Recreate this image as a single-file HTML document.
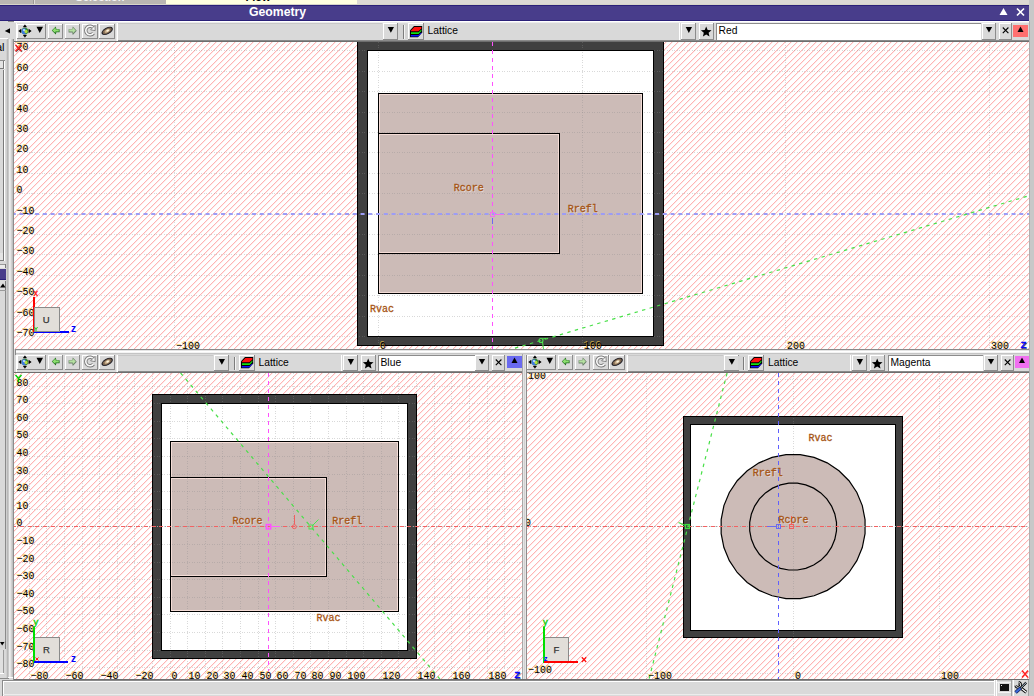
<!DOCTYPE html>
<html><head><meta charset="utf-8"><title>Geometry</title>
<style>
html,body{margin:0;padding:0;width:1034px;height:696px;overflow:hidden;background:#d9d9d9;}
svg text{font-family:"Liberation Sans",sans-serif;}
svg .m{font-family:"Liberation Mono",monospace;}
</style></head><body>
<svg width="1034" height="696" viewBox="0 0 1034 696" style="position:absolute;left:0;top:0" shape-rendering="crispEdges">
<defs><clipPath id="c1"><rect x="14" y="42" width="1015" height="307"/></clipPath><clipPath id="c2"><rect x="14" y="373" width="508" height="306"/></clipPath><clipPath id="c3"><rect x="527" y="373" width="502" height="306"/></clipPath></defs>
<rect x="0" y="0" width="1034" height="696" fill="#d9d9d9" />
<rect x="0" y="0" width="1034" height="5" fill="#b9b6b2" />
<rect x="166" y="0" width="191" height="4" fill="#ffffe0" />
<rect x="357" y="0" width="672" height="4" fill="#dcd9d4" />
<rect x="0" y="4" width="1029" height="1" fill="#d6d4c8" />
<rect x="33" y="0" width="1" height="4" fill="#9a9894" />
<rect x="34" y="0" width="1" height="4" fill="#dedcd8" />
<text x="100" y="1" font-size="11" font-weight="bold" fill="#f4f4f4" text-anchor="middle">Selection</text>
<text x="258" y="1" font-size="11" font-weight="bold" fill="#000" text-anchor="middle">Flow</text>
<rect x="0" y="5" width="1029" height="16" fill="#483d8b" />
<rect x="0" y="5" width="1029" height="1" fill="#2a2078" />
<rect x="0" y="20" width="1029" height="1" fill="#2a2078" />
<text x="277.6" y="15.8" font-size="12.25" font-weight="bold" fill="#fff" text-anchor="middle">Geometry</text>
<path d="M999.5 15 L1003.5 8 L1007.5 15 Z" fill="#fff" shape-rendering="auto"/>
<path d="M1017 8.5 L1024 15.5 M1024 8.5 L1017 15.5" stroke="#fff" stroke-width="1.7" shape-rendering="auto"/>
<rect x="1029" y="0" width="5" height="696" fill="#c8c8c8" />
<rect x="1029" y="21" width="1" height="660" fill="#b0b0b0" />
<rect x="0" y="21" width="14" height="659" fill="#d9d9d9" />
<rect x="8" y="21" width="6" height="1" fill="#8c8c8c" />
<path d="M4.8 30.9 L10 28.2 L10 33.6 Z" fill="#000" shape-rendering="auto"/>
<rect x="0" y="38" width="8" height="1" fill="#ffffff" />
<text x="-4.1" y="50.8" font-size="11" fill="#000">al</text>
<rect x="0" y="60" width="5" height="1" fill="#8c8c8c" />
<rect x="0" y="61" width="3" height="7" fill="#e4e4e4" />
<rect x="3" y="61" width="1" height="8" fill="#7a7a7a" />
<rect x="0" y="68" width="4" height="1" fill="#7a7a7a" />
<rect x="4" y="61" width="1" height="8" fill="#ffffff" />
<rect x="3" y="70" width="1" height="183" fill="#7a7a7a" />
<rect x="4" y="70" width="1" height="183" fill="#ffffff" />
<rect x="0" y="253" width="3" height="8" fill="#e4e4e4" />
<rect x="3" y="253" width="1" height="8" fill="#7a7a7a" />
<rect x="0" y="260" width="4" height="1" fill="#7a7a7a" />
<rect x="4" y="253" width="1" height="8" fill="#ffffff" />
<rect x="0" y="264" width="6" height="4" fill="#ececec" />
<rect x="0" y="264" width="7" height="1" fill="#9a9a9a" />
<rect x="5" y="264" width="1" height="4" fill="#7a7a7a" />
<rect x="0" y="269" width="7" height="11" fill="#483d8b" />
<rect x="0" y="279" width="7" height="1" fill="#2a2078" />
<rect x="0" y="281" width="6" height="9" fill="#dcdcdc" />
<rect x="5" y="281" width="1" height="10" fill="#7a7a7a" />
<rect x="0" y="290" width="6" height="1" fill="#9a9a9a" />
<path d="M0 287.5 L3 283.5 L5.5 287.5 Z" fill="#000" shape-rendering="auto"/>
<rect x="5" y="291" width="1" height="350" fill="#8a8a8a" />
<rect x="0" y="641" width="5" height="7" fill="#d4d4d4" />
<rect x="5" y="641" width="1" height="8" fill="#7a7a7a" />
<path d="M0 642 L4.5 642 L2.2 645.5 Z" fill="#000" shape-rendering="auto"/>
<rect x="0" y="650" width="3" height="23" fill="#e0e0e0" />
<rect x="3" y="650" width="1" height="24" fill="#9a9a9a" />
<rect x="0" y="673" width="4" height="1" fill="#ffffff" />
<rect x="6" y="40" width="1" height="639" fill="#cfcfcf" />
<rect x="0" y="678" width="9" height="1" fill="#8a8a8a" />
<rect x="7" y="39" width="1" height="639" fill="#b8b8b8" />
<rect x="8" y="39" width="1" height="639" fill="#c8c8c8" />
<rect x="9" y="39" width="1" height="639" fill="#ececec" />
<rect x="10" y="39" width="1" height="639" fill="#e4e4e4" />
<rect x="11" y="39" width="1" height="639" fill="#d0d0d0" />
<rect x="12" y="39" width="1" height="639" fill="#c0c0c0" />
<rect x="13" y="39" width="1" height="641" fill="#8c8c8c" />
<rect x="8" y="677" width="5" height="1" fill="#ffffff" />
<rect x="14" y="21" width="1015" height="21" fill="#d9d9d9" />
<rect x="14" y="41" width="1015" height="1" fill="#6e6e6e" />
<rect x="16" y="22" width="1" height="19" fill="#ffffff" />
<rect x="117" y="22" width="1" height="19" fill="#ffffff" />
<rect x="17" y="24" width="29" height="15" fill="#d9d9d9" />
<rect x="17" y="24" width="29" height="1" fill="#ffffff" />
<rect x="17" y="24" width="1" height="15" fill="#ffffff" />
<rect x="17" y="38" width="29" height="1" fill="#8c8c8c" />
<rect x="45" y="24" width="1" height="15" fill="#8c8c8c" />
<g shape-rendering="auto"><path d="M24.9 24.8 L23.299999999999997 27.1 L26.5 27.1 Z M24.9 37.3 L23.299999999999997 35 L26.5 35 Z M18.7 31 L21.099999999999998 29.3 L21.099999999999998 32.7 Z M31.2 31 L28.799999999999997 29.3 L28.799999999999997 32.7 Z" fill="#000" stroke="#000" stroke-width="0.6"/><circle cx="24.9" cy="31" r="3.3" fill="#2f8a2a"/><ellipse cx="24.0" cy="31.2" rx="2.3" ry="3" fill="#3c78e0"/><circle cx="26.0" cy="31.4" r="1.6" fill="#b8e040"/><circle cx="24.0" cy="30.1" r="1.1" fill="#c8e4ff"/></g>
<path d="M36.5 26.8 L43 26.8 L39.75 33 Z" fill="#000" shape-rendering="auto"/>
<rect x="48" y="24" width="15" height="15" fill="#d9d9d9" />
<rect x="48" y="24" width="15" height="1" fill="#ffffff" />
<rect x="48" y="24" width="1" height="15" fill="#ffffff" />
<rect x="48" y="38" width="15" height="1" fill="#8c8c8c" />
<rect x="62" y="24" width="1" height="15" fill="#8c8c8c" />
<g shape-rendering="auto"><path d="M51.8 30.6 L55.8 26.6 L56.4 29.200000000000003 L59.599999999999994 29.200000000000003 L59.599999999999994 32.2 L56.4 32.2 L55.8 34.6 Z" fill="#1d6a1d"/><path d="M52.4 30.6 L55.4 27.6 L55.8 29.6 L58.8 29.6 L58.8 31.400000000000002 L55.4 31.400000000000002 L55.4 33.0 Z" fill="#8ee070"/></g>
<rect x="65" y="24" width="15" height="15" fill="#d9d9d9" />
<rect x="65" y="24" width="15" height="1" fill="#ffffff" />
<rect x="65" y="24" width="1" height="15" fill="#ffffff" />
<rect x="65" y="38" width="15" height="1" fill="#8c8c8c" />
<rect x="79" y="24" width="1" height="15" fill="#8c8c8c" />
<g shape-rendering="auto"><path d="M76.80000000000001 30.8 L72.80000000000001 26.6 L72.2 29.200000000000003 L68.60000000000001 29.200000000000003 L68.60000000000001 32.4 L72.2 32.4 L72.80000000000001 35.0 Z" fill="#6a806a"/><path d="M75.80000000000001 30.400000000000002 L72.80000000000001 27.400000000000002 L72.4 29.6 L69.2 29.6 L69.2 31.6 L72.80000000000001 31.6 L72.80000000000001 33.2 Z" fill="#b4e0a0"/></g>
<rect x="82" y="24" width="16" height="15" fill="#d9d9d9" />
<rect x="82" y="24" width="16" height="1" fill="#ffffff" />
<rect x="82" y="24" width="1" height="15" fill="#ffffff" />
<rect x="82" y="38" width="16" height="1" fill="#8c8c8c" />
<rect x="97" y="24" width="1" height="15" fill="#8c8c8c" />
<g shape-rendering="auto" fill="none"><path d="M93.7 28.2 A4.3 4.3 0 1 0 93.5 33.1" stroke="#7a7a7a" stroke-width="3.4"/><path d="M93.7 28.2 A4.3 4.3 0 1 0 93.5 33.1" stroke="#f8f8f8" stroke-width="1.6"/><path d="M90.6 29.8 L95.2 30.6 L95 25.4 Z" fill="#f8f8f8" stroke="#7a7a7a" stroke-width="0.9"/></g>
<rect x="99" y="24" width="16" height="15" fill="#d9d9d9" />
<rect x="99" y="24" width="16" height="1" fill="#ffffff" />
<rect x="99" y="24" width="1" height="15" fill="#ffffff" />
<rect x="99" y="38" width="16" height="1" fill="#8c8c8c" />
<rect x="114" y="24" width="1" height="15" fill="#8c8c8c" />
<g shape-rendering="auto" transform="translate(107.2,30.9) rotate(-28)"><ellipse rx="6.2" ry="3.3" fill="#1c1c24"/><ellipse rx="5" ry="2.3" fill="#7c6650"/><ellipse rx="3" ry="1.5" fill="#c8ae88"/><ellipse cx="0.5" rx="1.5" ry="0.9" fill="#fff4dc"/></g>
<rect x="118" y="23" width="264" height="1" fill="#c8c8c8" />
<rect x="118" y="40" width="911" height="1" fill="#8a8a8a" />
<rect x="116" y="22" width="1" height="19" fill="#ececec" />
<rect x="383" y="23" width="15" height="17" fill="#d9d9d9" />
<rect x="383" y="23" width="15" height="1" fill="#ffffff" />
<rect x="383" y="23" width="1" height="17" fill="#ffffff" />
<rect x="383" y="39" width="15" height="1" fill="#8c8c8c" />
<rect x="397" y="23" width="1" height="17" fill="#8c8c8c" />
<path d="M387.7 27 L394 27 L390.85 32.8 Z" fill="#000" shape-rendering="auto"/>
<rect x="398" y="24" width="10" height="15" fill="#d4d4d4" />
<rect x="403" y="25" width="1" height="14" fill="#7c7c7c" />
<rect x="404" y="25" width="1" height="14" fill="#f4f4f4" />
<rect x="408" y="23" width="16" height="17" fill="#d9d9d9" />
<rect x="408" y="23" width="16" height="1" fill="#ffffff" />
<rect x="408" y="23" width="1" height="17" fill="#ffffff" />
<rect x="408" y="39" width="16" height="1" fill="#8c8c8c" />
<rect x="423" y="23" width="1" height="17" fill="#8c8c8c" />
<g shape-rendering="auto"><polygon points="410,30.2 414,26 422.2,26 422.2,32.5 418,37.2 410,37.2" fill="#000"/><polygon points="411,30.6 414.4,27 421.4,27 421.4,28.5 418.4,31.2 411,31.2" fill="#ff1010"/><polygon points="411,32.2 418.6,32.2 421.4,29.6 421.4,31 418.6,34 411,34" fill="#10e010"/><polygon points="410.8,35 418.6,35 421.4,32.2 421.4,33.2 418.4,36.4 410.8,36.4" fill="#1010ff"/></g>
<text x="427.6" y="33.6" font-size="10.3" fill="#000">Lattice</text>
<rect x="679" y="23" width="1" height="17" fill="#ffffff" />
<rect x="681" y="23" width="15" height="17" fill="#d9d9d9" />
<rect x="681" y="23" width="15" height="1" fill="#ffffff" />
<rect x="681" y="23" width="1" height="17" fill="#ffffff" />
<rect x="681" y="39" width="15" height="1" fill="#8c8c8c" />
<rect x="695" y="23" width="1" height="17" fill="#8c8c8c" />
<path d="M685.7 27 L692 27 L688.85 33 Z" fill="#000" shape-rendering="auto"/>
<rect x="699" y="23" width="15" height="17" fill="#d9d9d9" />
<rect x="699" y="23" width="15" height="1" fill="#ffffff" />
<rect x="699" y="23" width="1" height="17" fill="#ffffff" />
<rect x="699" y="39" width="15" height="1" fill="#8c8c8c" />
<rect x="713" y="23" width="1" height="17" fill="#8c8c8c" />
<polygon points="706.2,26.4 707.68,29.96 711.53,30.27 708.6,32.78 709.49,36.53 706.2,34.52 702.91,36.53 703.8,32.78 700.87,30.27 704.72,29.96" fill="#000" shape-rendering="auto"/>
<rect x="716" y="23" width="265" height="17" fill="#ffffff" />
<rect x="716" y="23" width="265" height="1" fill="#8c8c8c" />
<rect x="716" y="23" width="1" height="17" fill="#8c8c8c" />
<text x="718.5" y="34.4" font-size="10.3" fill="#000">Red</text>
<rect x="982" y="23" width="14" height="17" fill="#d9d9d9" />
<rect x="982" y="23" width="14" height="1" fill="#ffffff" />
<rect x="982" y="23" width="1" height="17" fill="#ffffff" />
<rect x="982" y="39" width="14" height="1" fill="#8c8c8c" />
<rect x="995" y="23" width="1" height="17" fill="#8c8c8c" />
<path d="M985.85 27.1 L992.15 27.1 L989 32.5 Z" fill="#000" shape-rendering="auto"/>
<rect x="999" y="23" width="13" height="17" fill="#d9d9d9" />
<rect x="999" y="23" width="13" height="1" fill="#ffffff" />
<rect x="999" y="23" width="1" height="17" fill="#ffffff" />
<rect x="999" y="39" width="13" height="1" fill="#8c8c8c" />
<rect x="1011" y="23" width="1" height="17" fill="#8c8c8c" />
<path d="M1002.8 27.5 L1008.4 33.1 M1008.4 27.5 L1002.8 33.1" stroke="#000" stroke-width="1.1" shape-rendering="auto"/>
<rect x="1013" y="25" width="15" height="12" fill="#ff7070" />
<path d="M1017.5 32 L1023.5 32 L1020.5 26.6 Z" fill="#000" shape-rendering="auto"/>
<rect x="14" y="21" width="1015" height="1" fill="#ffffff" />
<rect x="14" y="22" width="1015" height="1" fill="#ececec" />
<rect x="14" y="352" width="509" height="21" fill="#d9d9d9" />
<rect x="14" y="372" width="509" height="1" fill="#6e6e6e" />
<rect x="16" y="353" width="1" height="19" fill="#ffffff" />
<rect x="117" y="353" width="1" height="19" fill="#ffffff" />
<rect x="17" y="355" width="29" height="15" fill="#d9d9d9" />
<rect x="17" y="355" width="29" height="1" fill="#ffffff" />
<rect x="17" y="355" width="1" height="15" fill="#ffffff" />
<rect x="17" y="369" width="29" height="1" fill="#8c8c8c" />
<rect x="45" y="355" width="1" height="15" fill="#8c8c8c" />
<g shape-rendering="auto"><path d="M24.9 355.8 L23.299999999999997 358.1 L26.5 358.1 Z M24.9 368.3 L23.299999999999997 366 L26.5 366 Z M18.7 362 L21.099999999999998 360.3 L21.099999999999998 363.7 Z M31.2 362 L28.799999999999997 360.3 L28.799999999999997 363.7 Z" fill="#000" stroke="#000" stroke-width="0.6"/><circle cx="24.9" cy="362" r="3.3" fill="#2f8a2a"/><ellipse cx="24.0" cy="362.2" rx="2.3" ry="3" fill="#3c78e0"/><circle cx="26.0" cy="362.4" r="1.6" fill="#b8e040"/><circle cx="24.0" cy="361.1" r="1.1" fill="#c8e4ff"/></g>
<path d="M36.5 357.8 L43 357.8 L39.75 364 Z" fill="#000" shape-rendering="auto"/>
<rect x="48" y="355" width="15" height="15" fill="#d9d9d9" />
<rect x="48" y="355" width="15" height="1" fill="#ffffff" />
<rect x="48" y="355" width="1" height="15" fill="#ffffff" />
<rect x="48" y="369" width="15" height="1" fill="#8c8c8c" />
<rect x="62" y="355" width="1" height="15" fill="#8c8c8c" />
<g shape-rendering="auto"><path d="M51.8 361.6 L55.8 357.6 L56.4 360.20000000000005 L59.599999999999994 360.20000000000005 L59.599999999999994 363.20000000000005 L56.4 363.20000000000005 L55.8 365.6 Z" fill="#1d6a1d"/><path d="M52.4 361.6 L55.4 358.6 L55.8 360.6 L58.8 360.6 L58.8 362.40000000000003 L55.4 362.40000000000003 L55.4 364.0 Z" fill="#8ee070"/></g>
<rect x="65" y="355" width="15" height="15" fill="#d9d9d9" />
<rect x="65" y="355" width="15" height="1" fill="#ffffff" />
<rect x="65" y="355" width="1" height="15" fill="#ffffff" />
<rect x="65" y="369" width="15" height="1" fill="#8c8c8c" />
<rect x="79" y="355" width="1" height="15" fill="#8c8c8c" />
<g shape-rendering="auto"><path d="M76.80000000000001 361.8 L72.80000000000001 357.6 L72.2 360.20000000000005 L68.60000000000001 360.20000000000005 L68.60000000000001 363.40000000000003 L72.2 363.40000000000003 L72.80000000000001 366.0 Z" fill="#6a806a"/><path d="M75.80000000000001 361.40000000000003 L72.80000000000001 358.40000000000003 L72.4 360.6 L69.2 360.6 L69.2 362.6 L72.80000000000001 362.6 L72.80000000000001 364.20000000000005 Z" fill="#b4e0a0"/></g>
<rect x="82" y="355" width="16" height="15" fill="#d9d9d9" />
<rect x="82" y="355" width="16" height="1" fill="#ffffff" />
<rect x="82" y="355" width="1" height="15" fill="#ffffff" />
<rect x="82" y="369" width="16" height="1" fill="#8c8c8c" />
<rect x="97" y="355" width="1" height="15" fill="#8c8c8c" />
<g shape-rendering="auto" fill="none"><path d="M93.7 359.2 A4.3 4.3 0 1 0 93.5 364.1" stroke="#7a7a7a" stroke-width="3.4"/><path d="M93.7 359.2 A4.3 4.3 0 1 0 93.5 364.1" stroke="#f8f8f8" stroke-width="1.6"/><path d="M90.6 360.8 L95.2 361.6 L95 356.4 Z" fill="#f8f8f8" stroke="#7a7a7a" stroke-width="0.9"/></g>
<rect x="99" y="355" width="16" height="15" fill="#d9d9d9" />
<rect x="99" y="355" width="16" height="1" fill="#ffffff" />
<rect x="99" y="355" width="1" height="15" fill="#ffffff" />
<rect x="99" y="369" width="16" height="1" fill="#8c8c8c" />
<rect x="114" y="355" width="1" height="15" fill="#8c8c8c" />
<g shape-rendering="auto" transform="translate(107.2,361.9) rotate(-28)"><ellipse rx="6.2" ry="3.3" fill="#1c1c24"/><ellipse rx="5" ry="2.3" fill="#7c6650"/><ellipse rx="3" ry="1.5" fill="#c8ae88"/><ellipse cx="0.5" rx="1.5" ry="0.9" fill="#fff4dc"/></g>
<rect x="118" y="355" width="95" height="1" fill="#c8c8c8" />
<rect x="118" y="371" width="405" height="1" fill="#8a8a8a" />
<rect x="116" y="353" width="1" height="19" fill="#ececec" />
<rect x="214" y="355" width="15" height="16" fill="#d9d9d9" />
<rect x="214" y="355" width="15" height="1" fill="#ffffff" />
<rect x="214" y="355" width="1" height="16" fill="#ffffff" />
<rect x="214" y="370" width="15" height="1" fill="#8c8c8c" />
<rect x="228" y="355" width="1" height="16" fill="#8c8c8c" />
<path d="M218.7 359 L225 359 L221.85 364.8 Z" fill="#000" shape-rendering="auto"/>
<rect x="229" y="356" width="10" height="14" fill="#d4d4d4" />
<rect x="234" y="357" width="1" height="13" fill="#7c7c7c" />
<rect x="235" y="357" width="1" height="13" fill="#f4f4f4" />
<rect x="239" y="355" width="16" height="16" fill="#d9d9d9" />
<rect x="239" y="355" width="16" height="1" fill="#ffffff" />
<rect x="239" y="355" width="1" height="16" fill="#ffffff" />
<rect x="239" y="370" width="16" height="1" fill="#8c8c8c" />
<rect x="254" y="355" width="1" height="16" fill="#8c8c8c" />
<g shape-rendering="auto"><polygon points="241,361.2 245,357 253.2,357 253.2,363.5 249,368.2 241,368.2" fill="#000"/><polygon points="242,361.6 245.4,358 252.4,358 252.4,359.5 249.4,362.2 242,362.2" fill="#ff1010"/><polygon points="242,363.2 249.6,363.2 252.4,360.6 252.4,362 249.6,365 242,365" fill="#10e010"/><polygon points="241.8,366 249.6,366 252.4,363.2 252.4,364.2 249.4,367.4 241.8,367.4" fill="#1010ff"/></g>
<text x="258.5" y="365.6" font-size="10.3" fill="#000">Lattice</text>
<rect x="341" y="355" width="1" height="16" fill="#ffffff" />
<rect x="343" y="355" width="15" height="16" fill="#d9d9d9" />
<rect x="343" y="355" width="15" height="1" fill="#ffffff" />
<rect x="343" y="355" width="1" height="16" fill="#ffffff" />
<rect x="343" y="370" width="15" height="1" fill="#8c8c8c" />
<rect x="357" y="355" width="1" height="16" fill="#8c8c8c" />
<path d="M347.7 359 L354 359 L350.85 365 Z" fill="#000" shape-rendering="auto"/>
<rect x="361" y="355" width="15" height="16" fill="#d9d9d9" />
<rect x="361" y="355" width="15" height="1" fill="#ffffff" />
<rect x="361" y="355" width="1" height="16" fill="#ffffff" />
<rect x="361" y="370" width="15" height="1" fill="#8c8c8c" />
<rect x="375" y="355" width="1" height="16" fill="#8c8c8c" />
<polygon points="368.2,358.4 369.68,361.96 373.53,362.27 370.6,364.78 371.49,368.53 368.2,366.52 364.91,368.53 365.8,364.78 362.87,362.27 366.72,361.96" fill="#000" shape-rendering="auto"/>
<rect x="378" y="355" width="97" height="16" fill="#ffffff" />
<rect x="378" y="355" width="97" height="1" fill="#8c8c8c" />
<rect x="378" y="355" width="1" height="16" fill="#8c8c8c" />
<text x="380.5" y="366.4" font-size="10.3" fill="#000">Blue</text>
<rect x="475" y="355" width="14" height="16" fill="#d9d9d9" />
<rect x="475" y="355" width="14" height="1" fill="#ffffff" />
<rect x="475" y="355" width="1" height="16" fill="#ffffff" />
<rect x="475" y="370" width="14" height="1" fill="#8c8c8c" />
<rect x="488" y="355" width="1" height="16" fill="#8c8c8c" />
<path d="M478.85 359.1 L485.15 359.1 L482 364.5 Z" fill="#000" shape-rendering="auto"/>
<rect x="492" y="355" width="13" height="16" fill="#d9d9d9" />
<rect x="492" y="355" width="13" height="1" fill="#ffffff" />
<rect x="492" y="355" width="1" height="16" fill="#ffffff" />
<rect x="492" y="370" width="13" height="1" fill="#8c8c8c" />
<rect x="504" y="355" width="1" height="16" fill="#8c8c8c" />
<path d="M495.8 359.5 L501.4 365.1 M501.4 359.5 L495.8 365.1" stroke="#000" stroke-width="1.1" shape-rendering="auto"/>
<rect x="507" y="356" width="15" height="12" fill="#6a6af0" />
<path d="M511.5 363 L517.5 363 L514.5 357.6 Z" fill="#000" shape-rendering="auto"/>
<rect x="527" y="352" width="502" height="21" fill="#d9d9d9" />
<rect x="527" y="372" width="502" height="1" fill="#6e6e6e" />
<rect x="526" y="353" width="1" height="19" fill="#ffffff" />
<rect x="627" y="353" width="1" height="19" fill="#ffffff" />
<rect x="527" y="355" width="29" height="15" fill="#d9d9d9" />
<rect x="527" y="355" width="29" height="1" fill="#ffffff" />
<rect x="527" y="355" width="1" height="15" fill="#ffffff" />
<rect x="527" y="369" width="29" height="1" fill="#8c8c8c" />
<rect x="555" y="355" width="1" height="15" fill="#8c8c8c" />
<g shape-rendering="auto"><path d="M534.9 355.8 L533.3 358.1 L536.5 358.1 Z M534.9 368.3 L533.3 366 L536.5 366 Z M528.6999999999999 362 L531.1 360.3 L531.1 363.7 Z M541.1999999999999 362 L538.8 360.3 L538.8 363.7 Z" fill="#000" stroke="#000" stroke-width="0.6"/><circle cx="534.9" cy="362" r="3.3" fill="#2f8a2a"/><ellipse cx="534.0" cy="362.2" rx="2.3" ry="3" fill="#3c78e0"/><circle cx="536.0" cy="362.4" r="1.6" fill="#b8e040"/><circle cx="534.0" cy="361.1" r="1.1" fill="#c8e4ff"/></g>
<path d="M546.5 357.8 L553 357.8 L549.75 364 Z" fill="#000" shape-rendering="auto"/>
<rect x="558" y="355" width="15" height="15" fill="#d9d9d9" />
<rect x="558" y="355" width="15" height="1" fill="#ffffff" />
<rect x="558" y="355" width="1" height="15" fill="#ffffff" />
<rect x="558" y="369" width="15" height="1" fill="#8c8c8c" />
<rect x="572" y="355" width="1" height="15" fill="#8c8c8c" />
<g shape-rendering="auto"><path d="M561.8 361.6 L565.8 357.6 L566.4 360.20000000000005 L569.5999999999999 360.20000000000005 L569.5999999999999 363.20000000000005 L566.4 363.20000000000005 L565.8 365.6 Z" fill="#1d6a1d"/><path d="M562.4 361.6 L565.4 358.6 L565.8 360.6 L568.8 360.6 L568.8 362.40000000000003 L565.4 362.40000000000003 L565.4 364.0 Z" fill="#8ee070"/></g>
<rect x="575" y="355" width="15" height="15" fill="#d9d9d9" />
<rect x="575" y="355" width="15" height="1" fill="#ffffff" />
<rect x="575" y="355" width="1" height="15" fill="#ffffff" />
<rect x="575" y="369" width="15" height="1" fill="#8c8c8c" />
<rect x="589" y="355" width="1" height="15" fill="#8c8c8c" />
<g shape-rendering="auto"><path d="M586.8 361.8 L582.8 357.6 L582.1999999999999 360.20000000000005 L578.6 360.20000000000005 L578.6 363.40000000000003 L582.1999999999999 363.40000000000003 L582.8 366.0 Z" fill="#6a806a"/><path d="M585.8 361.40000000000003 L582.8 358.40000000000003 L582.4 360.6 L579.1999999999999 360.6 L579.1999999999999 362.6 L582.8 362.6 L582.8 364.20000000000005 Z" fill="#b4e0a0"/></g>
<rect x="593" y="355" width="16" height="15" fill="#d9d9d9" />
<rect x="593" y="355" width="16" height="1" fill="#ffffff" />
<rect x="593" y="355" width="1" height="15" fill="#ffffff" />
<rect x="593" y="369" width="16" height="1" fill="#8c8c8c" />
<rect x="608" y="355" width="1" height="15" fill="#8c8c8c" />
<g shape-rendering="auto" fill="none"><path d="M604.7 359.2 A4.3 4.3 0 1 0 604.5 364.1" stroke="#7a7a7a" stroke-width="3.4"/><path d="M604.7 359.2 A4.3 4.3 0 1 0 604.5 364.1" stroke="#f8f8f8" stroke-width="1.6"/><path d="M601.6 360.8 L606.2 361.6 L606 356.4 Z" fill="#f8f8f8" stroke="#7a7a7a" stroke-width="0.9"/></g>
<rect x="609" y="355" width="16" height="15" fill="#d9d9d9" />
<rect x="609" y="355" width="16" height="1" fill="#ffffff" />
<rect x="609" y="355" width="1" height="15" fill="#ffffff" />
<rect x="609" y="369" width="16" height="1" fill="#8c8c8c" />
<rect x="624" y="355" width="1" height="15" fill="#8c8c8c" />
<g shape-rendering="auto" transform="translate(617.2,361.9) rotate(-28)"><ellipse rx="6.2" ry="3.3" fill="#1c1c24"/><ellipse rx="5" ry="2.3" fill="#7c6650"/><ellipse rx="3" ry="1.5" fill="#c8ae88"/><ellipse cx="0.5" rx="1.5" ry="0.9" fill="#fff4dc"/></g>
<rect x="628" y="355" width="95" height="1" fill="#c8c8c8" />
<rect x="628" y="371" width="401" height="1" fill="#8a8a8a" />
<rect x="626" y="353" width="1" height="19" fill="#ececec" />
<rect x="724" y="355" width="15" height="16" fill="#d9d9d9" />
<rect x="724" y="355" width="15" height="1" fill="#ffffff" />
<rect x="724" y="355" width="1" height="16" fill="#ffffff" />
<rect x="724" y="370" width="15" height="1" fill="#8c8c8c" />
<rect x="738" y="355" width="1" height="16" fill="#8c8c8c" />
<path d="M728.7 359 L735 359 L731.85 364.8 Z" fill="#000" shape-rendering="auto"/>
<rect x="738" y="356" width="10" height="14" fill="#d4d4d4" />
<rect x="743" y="357" width="1" height="13" fill="#7c7c7c" />
<rect x="744" y="357" width="1" height="13" fill="#f4f4f4" />
<rect x="748" y="355" width="16" height="16" fill="#d9d9d9" />
<rect x="748" y="355" width="16" height="1" fill="#ffffff" />
<rect x="748" y="355" width="1" height="16" fill="#ffffff" />
<rect x="748" y="370" width="16" height="1" fill="#8c8c8c" />
<rect x="763" y="355" width="1" height="16" fill="#8c8c8c" />
<g shape-rendering="auto"><polygon points="750,361.2 754,357 762.2,357 762.2,363.5 758,368.2 750,368.2" fill="#000"/><polygon points="751,361.6 754.4,358 761.4,358 761.4,359.5 758.4,362.2 751,362.2" fill="#ff1010"/><polygon points="751,363.2 758.6,363.2 761.4,360.6 761.4,362 758.6,365 751,365" fill="#10e010"/><polygon points="750.8,366 758.6,366 761.4,363.2 761.4,364.2 758.4,367.4 750.8,367.4" fill="#1010ff"/></g>
<text x="768" y="365.6" font-size="10.3" fill="#000">Lattice</text>
<rect x="850" y="355" width="1" height="16" fill="#ffffff" />
<rect x="852" y="355" width="15" height="16" fill="#d9d9d9" />
<rect x="852" y="355" width="15" height="1" fill="#ffffff" />
<rect x="852" y="355" width="1" height="16" fill="#ffffff" />
<rect x="852" y="370" width="15" height="1" fill="#8c8c8c" />
<rect x="866" y="355" width="1" height="16" fill="#8c8c8c" />
<path d="M856.7 359 L863 359 L859.85 365 Z" fill="#000" shape-rendering="auto"/>
<rect x="870" y="355" width="15" height="16" fill="#d9d9d9" />
<rect x="870" y="355" width="15" height="1" fill="#ffffff" />
<rect x="870" y="355" width="1" height="16" fill="#ffffff" />
<rect x="870" y="370" width="15" height="1" fill="#8c8c8c" />
<rect x="884" y="355" width="1" height="16" fill="#8c8c8c" />
<polygon points="877.2,358.4 878.68,361.96 882.53,362.27 879.6,364.78 880.49,368.53 877.2,366.52 873.91,368.53 874.8,364.78 871.87,362.27 875.72,361.96" fill="#000" shape-rendering="auto"/>
<rect x="888" y="355" width="95" height="16" fill="#ffffff" />
<rect x="888" y="355" width="95" height="1" fill="#8c8c8c" />
<rect x="888" y="355" width="1" height="16" fill="#8c8c8c" />
<text x="890.5" y="366.4" font-size="10.3" fill="#000">Magenta</text>
<rect x="984" y="355" width="14" height="16" fill="#d9d9d9" />
<rect x="984" y="355" width="14" height="1" fill="#ffffff" />
<rect x="984" y="355" width="1" height="16" fill="#ffffff" />
<rect x="984" y="370" width="14" height="1" fill="#8c8c8c" />
<rect x="997" y="355" width="1" height="16" fill="#8c8c8c" />
<path d="M987.85 359.1 L994.15 359.1 L991 364.5 Z" fill="#000" shape-rendering="auto"/>
<rect x="1001" y="355" width="13" height="16" fill="#d9d9d9" />
<rect x="1001" y="355" width="13" height="1" fill="#ffffff" />
<rect x="1001" y="355" width="1" height="16" fill="#ffffff" />
<rect x="1001" y="370" width="13" height="1" fill="#8c8c8c" />
<rect x="1013" y="355" width="1" height="16" fill="#8c8c8c" />
<path d="M1004.8 359.5 L1010.4 365.1 M1010.4 359.5 L1004.8 365.1" stroke="#000" stroke-width="1.1" shape-rendering="auto"/>
<rect x="1015" y="356" width="14" height="12" fill="#f070f0" />
<path d="M1019 363 L1025 363 L1022 357.6 Z" fill="#000" shape-rendering="auto"/>
<rect x="14" y="349" width="1015" height="6" fill="#d9d9d9" />
<rect x="15" y="349" width="1014" height="1" fill="#8a8a8a" />
<rect x="15" y="350" width="1014" height="1" fill="#e4e4e4" />
<rect x="15" y="351" width="1014" height="1" fill="#ffffff" />
<rect x="15" y="352" width="1014" height="1" fill="#f4f4f4" />
<rect x="15" y="353" width="1014" height="1" fill="#c4c4c4" />
<rect x="15" y="349" width="1" height="6" fill="#8a8a8a" />
<rect x="522" y="354" width="1" height="326" fill="#a8a8a8" />
<rect x="523" y="355" width="3" height="325" fill="#e4e4e4" />
<rect x="524" y="355" width="1" height="325" fill="#d0d0d0" />
<rect x="526" y="355" width="1" height="325" fill="#8c8c8c" />
<g clip-path="url(#c1)">
<rect x="14" y="42" width="1015" height="307" fill="#ffffff" />
<path d="M6 40L-304 350M13 40L-297 350M19 40L-291 350M25 40L-285 350M31 40L-279 350M38 40L-272 350M44 40L-266 350M50 40L-260 350M56 40L-254 350M63 40L-247 350M69 40L-241 350M75 40L-235 350M81 40L-229 350M88 40L-222 350M94 40L-216 350M100 40L-210 350M106 40L-204 350M113 40L-197 350M119 40L-191 350M125 40L-185 350M131 40L-179 350M138 40L-172 350M144 40L-166 350M150 40L-160 350M156 40L-154 350M163 40L-147 350M169 40L-141 350M175 40L-135 350M181 40L-129 350M188 40L-122 350M194 40L-116 350M200 40L-110 350M206 40L-104 350M213 40L-97 350M219 40L-91 350M225 40L-85 350M231 40L-79 350M238 40L-72 350M244 40L-66 350M250 40L-60 350M256 40L-54 350M263 40L-47 350M269 40L-41 350M275 40L-35 350M281 40L-29 350M288 40L-22 350M294 40L-16 350M300 40L-10 350M306 40L-4 350M313 40L3 350M319 40L9 350M325 40L15 350M331 40L21 350M338 40L28 350M344 40L34 350M350 40L40 350M356 40L46 350M363 40L53 350M369 40L59 350M375 40L65 350M381 40L71 350M388 40L78 350M394 40L84 350M400 40L90 350M406 40L96 350M413 40L103 350M419 40L109 350M425 40L115 350M431 40L121 350M438 40L128 350M444 40L134 350M450 40L140 350M456 40L146 350M463 40L153 350M469 40L159 350M475 40L165 350M481 40L171 350M488 40L178 350M494 40L184 350M500 40L190 350M506 40L196 350M513 40L203 350M519 40L209 350M525 40L215 350M531 40L221 350M538 40L228 350M544 40L234 350M550 40L240 350M556 40L246 350M563 40L253 350M569 40L259 350M575 40L265 350M581 40L271 350M588 40L278 350M594 40L284 350M600 40L290 350M606 40L296 350M613 40L303 350M619 40L309 350M625 40L315 350M631 40L321 350M638 40L328 350M644 40L334 350M650 40L340 350M656 40L346 350M663 40L353 350M669 40L359 350M675 40L365 350M681 40L371 350M688 40L378 350M694 40L384 350M700 40L390 350M706 40L396 350M713 40L403 350M719 40L409 350M725 40L415 350M731 40L421 350M738 40L428 350M744 40L434 350M750 40L440 350M756 40L446 350M763 40L453 350M769 40L459 350M775 40L465 350M781 40L471 350M788 40L478 350M794 40L484 350M800 40L490 350M806 40L496 350M813 40L503 350M819 40L509 350M825 40L515 350M831 40L521 350M838 40L528 350M844 40L534 350M850 40L540 350M856 40L546 350M863 40L553 350M869 40L559 350M875 40L565 350M881 40L571 350M888 40L578 350M894 40L584 350M900 40L590 350M906 40L596 350M913 40L603 350M919 40L609 350M925 40L615 350M931 40L621 350M938 40L628 350M944 40L634 350M950 40L640 350M956 40L646 350M963 40L653 350M969 40L659 350M975 40L665 350M981 40L671 350M988 40L678 350M994 40L684 350M1000 40L690 350M1006 40L696 350M1013 40L703 350M1019 40L709 350M1025 40L715 350M1031 40L721 350M1038 40L728 350M1044 40L734 350M1050 40L740 350M1056 40L746 350M1063 40L753 350M1069 40L759 350M1075 40L765 350M1081 40L771 350M1088 40L778 350M1094 40L784 350M1100 40L790 350M1106 40L796 350M1113 40L803 350M1119 40L809 350M1125 40L815 350M1131 40L821 350M1138 40L828 350M1144 40L834 350M1150 40L840 350M1156 40L846 350M1163 40L853 350M1169 40L859 350M1175 40L865 350M1181 40L871 350M1188 40L878 350M1194 40L884 350M1200 40L890 350M1206 40L896 350M1213 40L903 350M1219 40L909 350M1225 40L915 350M1231 40L921 350M1238 40L928 350M1244 40L934 350M1250 40L940 350M1256 40L946 350M1263 40L953 350M1269 40L959 350M1275 40L965 350M1281 40L971 350M1288 40L978 350M1294 40L984 350M1300 40L990 350M1306 40L996 350M1313 40L1003 350M1319 40L1009 350M1325 40L1015 350M1331 40L1021 350M1338 40L1028 350M1344 40L1034 350M1350 40L1040 350" stroke="#ffeaea" stroke-width="1" fill="none"/>
<path d="M5 40L-305 350M12 40L-298 350M18 40L-292 350M24 40L-286 350M30 40L-280 350M37 40L-273 350M43 40L-267 350M49 40L-261 350M55 40L-255 350M62 40L-248 350M68 40L-242 350M74 40L-236 350M80 40L-230 350M87 40L-223 350M93 40L-217 350M99 40L-211 350M105 40L-205 350M112 40L-198 350M118 40L-192 350M124 40L-186 350M130 40L-180 350M137 40L-173 350M143 40L-167 350M149 40L-161 350M155 40L-155 350M162 40L-148 350M168 40L-142 350M174 40L-136 350M180 40L-130 350M187 40L-123 350M193 40L-117 350M199 40L-111 350M205 40L-105 350M212 40L-98 350M218 40L-92 350M224 40L-86 350M230 40L-80 350M237 40L-73 350M243 40L-67 350M249 40L-61 350M255 40L-55 350M262 40L-48 350M268 40L-42 350M274 40L-36 350M280 40L-30 350M287 40L-23 350M293 40L-17 350M299 40L-11 350M305 40L-5 350M312 40L2 350M318 40L8 350M324 40L14 350M330 40L20 350M337 40L27 350M343 40L33 350M349 40L39 350M355 40L45 350M362 40L52 350M368 40L58 350M374 40L64 350M380 40L70 350M387 40L77 350M393 40L83 350M399 40L89 350M405 40L95 350M412 40L102 350M418 40L108 350M424 40L114 350M430 40L120 350M437 40L127 350M443 40L133 350M449 40L139 350M455 40L145 350M462 40L152 350M468 40L158 350M474 40L164 350M480 40L170 350M487 40L177 350M493 40L183 350M499 40L189 350M505 40L195 350M512 40L202 350M518 40L208 350M524 40L214 350M530 40L220 350M537 40L227 350M543 40L233 350M549 40L239 350M555 40L245 350M562 40L252 350M568 40L258 350M574 40L264 350M580 40L270 350M587 40L277 350M593 40L283 350M599 40L289 350M605 40L295 350M612 40L302 350M618 40L308 350M624 40L314 350M630 40L320 350M637 40L327 350M643 40L333 350M649 40L339 350M655 40L345 350M662 40L352 350M668 40L358 350M674 40L364 350M680 40L370 350M687 40L377 350M693 40L383 350M699 40L389 350M705 40L395 350M712 40L402 350M718 40L408 350M724 40L414 350M730 40L420 350M737 40L427 350M743 40L433 350M749 40L439 350M755 40L445 350M762 40L452 350M768 40L458 350M774 40L464 350M780 40L470 350M787 40L477 350M793 40L483 350M799 40L489 350M805 40L495 350M812 40L502 350M818 40L508 350M824 40L514 350M830 40L520 350M837 40L527 350M843 40L533 350M849 40L539 350M855 40L545 350M862 40L552 350M868 40L558 350M874 40L564 350M880 40L570 350M887 40L577 350M893 40L583 350M899 40L589 350M905 40L595 350M912 40L602 350M918 40L608 350M924 40L614 350M930 40L620 350M937 40L627 350M943 40L633 350M949 40L639 350M955 40L645 350M962 40L652 350M968 40L658 350M974 40L664 350M980 40L670 350M987 40L677 350M993 40L683 350M999 40L689 350M1005 40L695 350M1012 40L702 350M1018 40L708 350M1024 40L714 350M1030 40L720 350M1037 40L727 350M1043 40L733 350M1049 40L739 350M1055 40L745 350M1062 40L752 350M1068 40L758 350M1074 40L764 350M1080 40L770 350M1087 40L777 350M1093 40L783 350M1099 40L789 350M1105 40L795 350M1112 40L802 350M1118 40L808 350M1124 40L814 350M1130 40L820 350M1137 40L827 350M1143 40L833 350M1149 40L839 350M1155 40L845 350M1162 40L852 350M1168 40L858 350M1174 40L864 350M1180 40L870 350M1187 40L877 350M1193 40L883 350M1199 40L889 350M1205 40L895 350M1212 40L902 350M1218 40L908 350M1224 40L914 350M1230 40L920 350M1237 40L927 350M1243 40L933 350M1249 40L939 350M1255 40L945 350M1262 40L952 350M1268 40L958 350M1274 40L964 350M1280 40L970 350M1287 40L977 350M1293 40L983 350M1299 40L989 350M1305 40L995 350M1312 40L1002 350M1318 40L1008 350M1324 40L1014 350M1330 40L1020 350M1337 40L1027 350M1343 40L1033 350M1349 40L1039 350" stroke="#ffb4b4" stroke-width="1" fill="none"/>
<rect x="357" y="30" width="307" height="316" fill="#404040" />
<rect x="368" y="51" width="285" height="285" fill="#ffffff" />
<rect x="378" y="93" width="265" height="201" fill="#ccbbb7" />
<rect x="379" y="94" width="263" height="1" fill="#f4dcd6" />
<rect x="379" y="94" width="1" height="199" fill="#f4dcd6" />
<rect x="379" y="292" width="263" height="1" fill="#f4dcd6" />
<rect x="641" y="94" width="1" height="199" fill="#f4dcd6" />
<rect x="378" y="133" width="182" height="121" fill="#ccbbb7" />
<rect x="379" y="134" width="180" height="1" fill="#f4dcd6" />
<rect x="379" y="134" width="1" height="119" fill="#f4dcd6" />
<rect x="379" y="252" width="180" height="1" fill="#f4dcd6" />
<rect x="558" y="134" width="1" height="119" fill="#f4dcd6" />
<line x1="14" y1="50.5" x2="1029" y2="50.5" stroke="#8c8c8c" stroke-width="1" stroke-dasharray="1 1.5" opacity="0.32"/>
<line x1="14" y1="71.5" x2="1029" y2="71.5" stroke="#8c8c8c" stroke-width="1" stroke-dasharray="1 1.5" opacity="0.32"/>
<line x1="14" y1="91.5" x2="1029" y2="91.5" stroke="#8c8c8c" stroke-width="1" stroke-dasharray="1 1.5" opacity="0.32"/>
<line x1="14" y1="112.5" x2="1029" y2="112.5" stroke="#8c8c8c" stroke-width="1" stroke-dasharray="1 1.5" opacity="0.32"/>
<line x1="14" y1="132.5" x2="1029" y2="132.5" stroke="#8c8c8c" stroke-width="1" stroke-dasharray="1 1.5" opacity="0.32"/>
<line x1="14" y1="152.5" x2="1029" y2="152.5" stroke="#8c8c8c" stroke-width="1" stroke-dasharray="1 1.5" opacity="0.32"/>
<line x1="14" y1="173.5" x2="1029" y2="173.5" stroke="#8c8c8c" stroke-width="1" stroke-dasharray="1 1.5" opacity="0.32"/>
<line x1="14" y1="193.5" x2="1029" y2="193.5" stroke="#8c8c8c" stroke-width="1" stroke-dasharray="1 1.5" opacity="0.32"/>
<line x1="14" y1="214.5" x2="1029" y2="214.5" stroke="#8c8c8c" stroke-width="1" stroke-dasharray="1 1.5" opacity="0.32"/>
<line x1="14" y1="234.5" x2="1029" y2="234.5" stroke="#8c8c8c" stroke-width="1" stroke-dasharray="1 1.5" opacity="0.32"/>
<line x1="14" y1="254.5" x2="1029" y2="254.5" stroke="#8c8c8c" stroke-width="1" stroke-dasharray="1 1.5" opacity="0.32"/>
<line x1="14" y1="275.5" x2="1029" y2="275.5" stroke="#8c8c8c" stroke-width="1" stroke-dasharray="1 1.5" opacity="0.32"/>
<line x1="14" y1="295.5" x2="1029" y2="295.5" stroke="#8c8c8c" stroke-width="1" stroke-dasharray="1 1.5" opacity="0.32"/>
<line x1="14" y1="316.5" x2="1029" y2="316.5" stroke="#8c8c8c" stroke-width="1" stroke-dasharray="1 1.5" opacity="0.32"/>
<line x1="14" y1="336.5" x2="1029" y2="336.5" stroke="#8c8c8c" stroke-width="1" stroke-dasharray="1 1.5" opacity="0.32"/>
<line x1="174.5" y1="42" x2="174.5" y2="349" stroke="#8c8c8c" stroke-width="1" stroke-dasharray="1 1.5" opacity="0.32"/>
<line x1="378.5" y1="42" x2="378.5" y2="349" stroke="#8c8c8c" stroke-width="1" stroke-dasharray="1 1.5" opacity="0.32"/>
<line x1="582.5" y1="42" x2="582.5" y2="349" stroke="#8c8c8c" stroke-width="1" stroke-dasharray="1 1.5" opacity="0.32"/>
<line x1="785.5" y1="42" x2="785.5" y2="349" stroke="#8c8c8c" stroke-width="1" stroke-dasharray="1 1.5" opacity="0.32"/>
<line x1="989.5" y1="42" x2="989.5" y2="349" stroke="#8c8c8c" stroke-width="1" stroke-dasharray="1 1.5" opacity="0.32"/>
<rect x="357" y="30" width="307" height="1" fill="#000" />
<rect x="357" y="345" width="307" height="1" fill="#000" />
<rect x="357" y="30" width="1" height="316" fill="#000" />
<rect x="663" y="30" width="1" height="316" fill="#000" />
<rect x="367" y="50" width="287" height="1" fill="#000" />
<rect x="367" y="336" width="287" height="1" fill="#000" />
<rect x="367" y="50" width="1" height="287" fill="#000" />
<rect x="653" y="50" width="1" height="287" fill="#000" />
<rect x="378" y="93" width="265" height="1" fill="#000" />
<rect x="378" y="293" width="265" height="1" fill="#000" />
<rect x="378" y="93" width="1" height="201" fill="#000" />
<rect x="642" y="93" width="1" height="201" fill="#000" />
<rect x="378" y="133" width="182" height="1" fill="#000" />
<rect x="378" y="253" width="182" height="1" fill="#000" />
<rect x="378" y="133" width="1" height="121" fill="#000" />
<rect x="559" y="133" width="1" height="121" fill="#000" />
<line x1="492.5" y1="42" x2="492.5" y2="349" stroke="#ff50ff" stroke-width="1" stroke-dasharray="4.2 3.8"/>
<line x1="11.8" y1="214" x2="1029" y2="214" stroke="#9c9cf6" stroke-width="1.8" stroke-dasharray="4 3.75" shape-rendering="auto"/>
<rect x="490.5" y="212.5" width="4" height="4" fill="none" stroke="#f070f0" stroke-width="1"/>
<rect x="495" y="214" width="9" height="1" fill="#f070f0" />
<rect x="492" y="218" width="1" height="6" fill="#6a6af0" />
<line x1="500" y1="352.6" x2="1040" y2="192.4" stroke="#48e048" stroke-width="1.2" stroke-dasharray="3.4 4.4" shape-rendering="auto"/>
<g shape-rendering="auto" fill="none" stroke="#4ee44e" stroke-width="1.1"><circle cx="541" cy="340.5" r="2"/><path d="M542.5 342 L543.5 349 M542 339 L546 338.5"/></g>
<text class="m" x="454.4" y="191.7" font-size="10" fill="#ffffff" opacity="0.5">Rcore</text>
<text class="m" x="453.7" y="191" font-size="10" fill="#a65414" stroke="#a65414" stroke-width="0.3">Rcore</text>
<text class="m" x="568.5" y="212.7" font-size="10" fill="#ffffff" opacity="0.5">Rrefl</text>
<text class="m" x="567.8" y="212" font-size="10" fill="#a65414" stroke="#a65414" stroke-width="0.3">Rrefl</text>
<text class="m" x="370.7" y="312.2" font-size="10" fill="#ffffff" opacity="0.5">Rvac</text>
<text class="m" x="370" y="311.5" font-size="10" fill="#a65414" stroke="#a65414" stroke-width="0.3">Rvac</text>
<text class="m" x="15.8" y="49" font-size="10" fill="#f0c848" opacity="0.75">70</text>
<text class="m" x="16.5" y="49.7" font-size="10" fill="#000">70</text>
<text class="m" x="15.8" y="70" font-size="10" fill="#f0c848" opacity="0.75">60</text>
<text class="m" x="16.5" y="70.7" font-size="10" fill="#000">60</text>
<text class="m" x="15.8" y="90" font-size="10" fill="#f0c848" opacity="0.75">50</text>
<text class="m" x="16.5" y="90.7" font-size="10" fill="#000">50</text>
<text class="m" x="15.8" y="111" font-size="10" fill="#f0c848" opacity="0.75">40</text>
<text class="m" x="16.5" y="111.7" font-size="10" fill="#000">40</text>
<text class="m" x="15.8" y="131" font-size="10" fill="#f0c848" opacity="0.75">30</text>
<text class="m" x="16.5" y="131.7" font-size="10" fill="#000">30</text>
<text class="m" x="15.8" y="151" font-size="10" fill="#f0c848" opacity="0.75">20</text>
<text class="m" x="16.5" y="151.7" font-size="10" fill="#000">20</text>
<text class="m" x="15.8" y="172" font-size="10" fill="#f0c848" opacity="0.75">10</text>
<text class="m" x="16.5" y="172.7" font-size="10" fill="#000">10</text>
<text class="m" x="15.8" y="192" font-size="10" fill="#f0c848" opacity="0.75">0</text>
<text class="m" x="16.5" y="192.7" font-size="10" fill="#000">0</text>
<text class="m" x="15.8" y="213" font-size="10" fill="#f0c848" opacity="0.75">−10</text>
<text class="m" x="16.5" y="213.7" font-size="10" fill="#000">−10</text>
<text class="m" x="15.8" y="233" font-size="10" fill="#f0c848" opacity="0.75">−20</text>
<text class="m" x="16.5" y="233.7" font-size="10" fill="#000">−20</text>
<text class="m" x="15.8" y="253" font-size="10" fill="#f0c848" opacity="0.75">−30</text>
<text class="m" x="16.5" y="253.7" font-size="10" fill="#000">−30</text>
<text class="m" x="15.8" y="274" font-size="10" fill="#f0c848" opacity="0.75">−40</text>
<text class="m" x="16.5" y="274.7" font-size="10" fill="#000">−40</text>
<text class="m" x="15.8" y="294" font-size="10" fill="#f0c848" opacity="0.75">−50</text>
<text class="m" x="16.5" y="294.7" font-size="10" fill="#000">−50</text>
<text class="m" x="15.8" y="315" font-size="10" fill="#f0c848" opacity="0.75">−60</text>
<text class="m" x="16.5" y="315.7" font-size="10" fill="#000">−60</text>
<text class="m" x="15.8" y="335" font-size="10" fill="#f0c848" opacity="0.75">−70</text>
<text class="m" x="16.5" y="335.7" font-size="10" fill="#000">−70</text>
<text class="m" x="175.3" y="347.8" font-size="10" fill="#f0c848" opacity="0.75">−100</text>
<text class="m" x="176" y="348.5" font-size="10" fill="#000">−100</text>
<text class="m" x="379.3" y="347.8" font-size="10" fill="#f0c848" opacity="0.75">0</text>
<text class="m" x="380" y="348.5" font-size="10" fill="#000">0</text>
<text class="m" x="583.3" y="347.8" font-size="10" fill="#f0c848" opacity="0.75">100</text>
<text class="m" x="584" y="348.5" font-size="10" fill="#000">100</text>
<text class="m" x="786.3" y="347.8" font-size="10" fill="#f0c848" opacity="0.75">200</text>
<text class="m" x="787" y="348.5" font-size="10" fill="#000">200</text>
<text class="m" x="990.3" y="347.8" font-size="10" fill="#f0c848" opacity="0.75">300</text>
<text class="m" x="991" y="348.5" font-size="10" fill="#000">300</text>
<path d="M16 45.5 L22 51.8 M22 45.5 L16 51.8" stroke="#000" stroke-width="1.3" shape-rendering="auto" opacity="0.6"/>
<path d="M15.4 44.8 L21.4 51.2 M21.4 44.8 L15.4 51.2" stroke="#ff2020" stroke-width="1.3" shape-rendering="auto"/>
<text x="1021.6" y="348.8" font-size="9.2" fill="#000" opacity="0.7">Z</text>
<text x="1020.8" y="348" font-size="9.2" fill="#0000ff" stroke="#0000ff" stroke-width="0.5">Z</text>
<rect x="33" y="297" width="2" height="35" fill="#ff0000" />
<rect x="34" y="331" width="35" height="2" fill="#0000ff" />
<rect x="34" y="307" width="26" height="25" fill="#e2ded9" />
<rect x="34" y="307" width="26" height="1" fill="#8a8a8a" />
<rect x="34" y="331" width="26" height="1" fill="#8a8a8a" />
<rect x="34" y="307" width="1" height="25" fill="#8a8a8a" />
<rect x="59" y="307" width="1" height="25" fill="#8a8a8a" />
<rect x="33" y="297" width="1" height="35" fill="#ff0000" />
<text x="46.3" y="323" font-size="9.5" fill="#333" text-anchor="middle" stroke="#333" stroke-width="0.25">U</text>
<path d="M34.5 327 L36 329.5 L37.5 327 M36 329.5 L36 331" stroke="#20d020" stroke-width="1" fill="none" shape-rendering="auto"/>
<text x="33.5" y="295.8" font-size="9" fill="#ff1010" stroke="#ff1010" stroke-width="0.35">x</text>
<text x="71" y="332" font-size="10" font-weight="bold" fill="#0000ff">z</text>
</g>
<g clip-path="url(#c2)">
<rect x="14" y="373" width="508" height="306" fill="#ffffff" />
<path d="M7 371L-302 680M13 371L-296 680M19 371L-290 680M25 371L-284 680M32 371L-277 680M38 371L-271 680M44 371L-265 680M50 371L-259 680M57 371L-252 680M63 371L-246 680M69 371L-240 680M75 371L-234 680M82 371L-227 680M88 371L-221 680M94 371L-215 680M100 371L-209 680M107 371L-202 680M113 371L-196 680M119 371L-190 680M125 371L-184 680M132 371L-177 680M138 371L-171 680M144 371L-165 680M150 371L-159 680M157 371L-152 680M163 371L-146 680M169 371L-140 680M175 371L-134 680M182 371L-127 680M188 371L-121 680M194 371L-115 680M200 371L-109 680M207 371L-102 680M213 371L-96 680M219 371L-90 680M225 371L-84 680M232 371L-77 680M238 371L-71 680M244 371L-65 680M250 371L-59 680M257 371L-52 680M263 371L-46 680M269 371L-40 680M275 371L-34 680M282 371L-27 680M288 371L-21 680M294 371L-15 680M300 371L-9 680M307 371L-2 680M313 371L4 680M319 371L10 680M325 371L16 680M332 371L23 680M338 371L29 680M344 371L35 680M350 371L41 680M357 371L48 680M363 371L54 680M369 371L60 680M375 371L66 680M382 371L73 680M388 371L79 680M394 371L85 680M400 371L91 680M407 371L98 680M413 371L104 680M419 371L110 680M425 371L116 680M432 371L123 680M438 371L129 680M444 371L135 680M450 371L141 680M457 371L148 680M463 371L154 680M469 371L160 680M475 371L166 680M482 371L173 680M488 371L179 680M494 371L185 680M500 371L191 680M507 371L198 680M513 371L204 680M519 371L210 680M525 371L216 680M532 371L223 680M538 371L229 680M544 371L235 680M550 371L241 680M557 371L248 680M563 371L254 680M569 371L260 680M575 371L266 680M582 371L273 680M588 371L279 680M594 371L285 680M600 371L291 680M607 371L298 680M613 371L304 680M619 371L310 680M625 371L316 680M632 371L323 680M638 371L329 680M644 371L335 680M650 371L341 680M657 371L348 680M663 371L354 680M669 371L360 680M675 371L366 680M682 371L373 680M688 371L379 680M694 371L385 680M700 371L391 680M707 371L398 680M713 371L404 680M719 371L410 680M725 371L416 680M732 371L423 680M738 371L429 680M744 371L435 680M750 371L441 680M757 371L448 680M763 371L454 680M769 371L460 680M775 371L466 680M782 371L473 680M788 371L479 680M794 371L485 680M800 371L491 680M807 371L498 680M813 371L504 680M819 371L510 680M825 371L516 680M832 371L523 680M838 371L529 680M844 371L535 680" stroke="#ffeaea" stroke-width="1" fill="none"/>
<path d="M6 371L-303 680M12 371L-297 680M18 371L-291 680M24 371L-285 680M31 371L-278 680M37 371L-272 680M43 371L-266 680M49 371L-260 680M56 371L-253 680M62 371L-247 680M68 371L-241 680M74 371L-235 680M81 371L-228 680M87 371L-222 680M93 371L-216 680M99 371L-210 680M106 371L-203 680M112 371L-197 680M118 371L-191 680M124 371L-185 680M131 371L-178 680M137 371L-172 680M143 371L-166 680M149 371L-160 680M156 371L-153 680M162 371L-147 680M168 371L-141 680M174 371L-135 680M181 371L-128 680M187 371L-122 680M193 371L-116 680M199 371L-110 680M206 371L-103 680M212 371L-97 680M218 371L-91 680M224 371L-85 680M231 371L-78 680M237 371L-72 680M243 371L-66 680M249 371L-60 680M256 371L-53 680M262 371L-47 680M268 371L-41 680M274 371L-35 680M281 371L-28 680M287 371L-22 680M293 371L-16 680M299 371L-10 680M306 371L-3 680M312 371L3 680M318 371L9 680M324 371L15 680M331 371L22 680M337 371L28 680M343 371L34 680M349 371L40 680M356 371L47 680M362 371L53 680M368 371L59 680M374 371L65 680M381 371L72 680M387 371L78 680M393 371L84 680M399 371L90 680M406 371L97 680M412 371L103 680M418 371L109 680M424 371L115 680M431 371L122 680M437 371L128 680M443 371L134 680M449 371L140 680M456 371L147 680M462 371L153 680M468 371L159 680M474 371L165 680M481 371L172 680M487 371L178 680M493 371L184 680M499 371L190 680M506 371L197 680M512 371L203 680M518 371L209 680M524 371L215 680M531 371L222 680M537 371L228 680M543 371L234 680M549 371L240 680M556 371L247 680M562 371L253 680M568 371L259 680M574 371L265 680M581 371L272 680M587 371L278 680M593 371L284 680M599 371L290 680M606 371L297 680M612 371L303 680M618 371L309 680M624 371L315 680M631 371L322 680M637 371L328 680M643 371L334 680M649 371L340 680M656 371L347 680M662 371L353 680M668 371L359 680M674 371L365 680M681 371L372 680M687 371L378 680M693 371L384 680M699 371L390 680M706 371L397 680M712 371L403 680M718 371L409 680M724 371L415 680M731 371L422 680M737 371L428 680M743 371L434 680M749 371L440 680M756 371L447 680M762 371L453 680M768 371L459 680M774 371L465 680M781 371L472 680M787 371L478 680M793 371L484 680M799 371L490 680M806 371L497 680M812 371L503 680M818 371L509 680M824 371L515 680M831 371L522 680M837 371L528 680M843 371L534 680" stroke="#ffb4b4" stroke-width="1" fill="none"/>
<rect x="152" y="394" width="265" height="265" fill="#404040" />
<rect x="162" y="404" width="245" height="246" fill="#ffffff" />
<rect x="170" y="441" width="229" height="171" fill="#ccbbb7" />
<rect x="171" y="442" width="227" height="1" fill="#f4dcd6" />
<rect x="171" y="442" width="1" height="169" fill="#f4dcd6" />
<rect x="171" y="610" width="227" height="1" fill="#f4dcd6" />
<rect x="397" y="442" width="1" height="169" fill="#f4dcd6" />
<rect x="170" y="477" width="157" height="100" fill="#ccbbb7" />
<rect x="171" y="478" width="155" height="1" fill="#f4dcd6" />
<rect x="171" y="478" width="1" height="98" fill="#f4dcd6" />
<rect x="171" y="575" width="155" height="1" fill="#f4dcd6" />
<rect x="325" y="478" width="1" height="98" fill="#f4dcd6" />
<line x1="11.5" y1="373" x2="11.5" y2="679" stroke="#8c8c8c" stroke-width="1" stroke-dasharray="1 1.5" opacity="0.32"/>
<line x1="29.5" y1="373" x2="29.5" y2="679" stroke="#8c8c8c" stroke-width="1" stroke-dasharray="1 1.5" opacity="0.32"/>
<line x1="46.5" y1="373" x2="46.5" y2="679" stroke="#8c8c8c" stroke-width="1" stroke-dasharray="1 1.5" opacity="0.32"/>
<line x1="64.5" y1="373" x2="64.5" y2="679" stroke="#8c8c8c" stroke-width="1" stroke-dasharray="1 1.5" opacity="0.32"/>
<line x1="82.5" y1="373" x2="82.5" y2="679" stroke="#8c8c8c" stroke-width="1" stroke-dasharray="1 1.5" opacity="0.32"/>
<line x1="99.5" y1="373" x2="99.5" y2="679" stroke="#8c8c8c" stroke-width="1" stroke-dasharray="1 1.5" opacity="0.32"/>
<line x1="117.5" y1="373" x2="117.5" y2="679" stroke="#8c8c8c" stroke-width="1" stroke-dasharray="1 1.5" opacity="0.32"/>
<line x1="134.5" y1="373" x2="134.5" y2="679" stroke="#8c8c8c" stroke-width="1" stroke-dasharray="1 1.5" opacity="0.32"/>
<line x1="152.5" y1="373" x2="152.5" y2="679" stroke="#8c8c8c" stroke-width="1" stroke-dasharray="1 1.5" opacity="0.32"/>
<line x1="170.5" y1="373" x2="170.5" y2="679" stroke="#8c8c8c" stroke-width="1" stroke-dasharray="1 1.5" opacity="0.32"/>
<line x1="187.5" y1="373" x2="187.5" y2="679" stroke="#8c8c8c" stroke-width="1" stroke-dasharray="1 1.5" opacity="0.32"/>
<line x1="205.5" y1="373" x2="205.5" y2="679" stroke="#8c8c8c" stroke-width="1" stroke-dasharray="1 1.5" opacity="0.32"/>
<line x1="222.5" y1="373" x2="222.5" y2="679" stroke="#8c8c8c" stroke-width="1" stroke-dasharray="1 1.5" opacity="0.32"/>
<line x1="240.5" y1="373" x2="240.5" y2="679" stroke="#8c8c8c" stroke-width="1" stroke-dasharray="1 1.5" opacity="0.32"/>
<line x1="258.5" y1="373" x2="258.5" y2="679" stroke="#8c8c8c" stroke-width="1" stroke-dasharray="1 1.5" opacity="0.32"/>
<line x1="275.5" y1="373" x2="275.5" y2="679" stroke="#8c8c8c" stroke-width="1" stroke-dasharray="1 1.5" opacity="0.32"/>
<line x1="293.5" y1="373" x2="293.5" y2="679" stroke="#8c8c8c" stroke-width="1" stroke-dasharray="1 1.5" opacity="0.32"/>
<line x1="310.5" y1="373" x2="310.5" y2="679" stroke="#8c8c8c" stroke-width="1" stroke-dasharray="1 1.5" opacity="0.32"/>
<line x1="328.5" y1="373" x2="328.5" y2="679" stroke="#8c8c8c" stroke-width="1" stroke-dasharray="1 1.5" opacity="0.32"/>
<line x1="346.5" y1="373" x2="346.5" y2="679" stroke="#8c8c8c" stroke-width="1" stroke-dasharray="1 1.5" opacity="0.32"/>
<line x1="363.5" y1="373" x2="363.5" y2="679" stroke="#8c8c8c" stroke-width="1" stroke-dasharray="1 1.5" opacity="0.32"/>
<line x1="381.5" y1="373" x2="381.5" y2="679" stroke="#8c8c8c" stroke-width="1" stroke-dasharray="1 1.5" opacity="0.32"/>
<line x1="398.5" y1="373" x2="398.5" y2="679" stroke="#8c8c8c" stroke-width="1" stroke-dasharray="1 1.5" opacity="0.32"/>
<line x1="416.5" y1="373" x2="416.5" y2="679" stroke="#8c8c8c" stroke-width="1" stroke-dasharray="1 1.5" opacity="0.32"/>
<line x1="434.5" y1="373" x2="434.5" y2="679" stroke="#8c8c8c" stroke-width="1" stroke-dasharray="1 1.5" opacity="0.32"/>
<line x1="451.5" y1="373" x2="451.5" y2="679" stroke="#8c8c8c" stroke-width="1" stroke-dasharray="1 1.5" opacity="0.32"/>
<line x1="469.5" y1="373" x2="469.5" y2="679" stroke="#8c8c8c" stroke-width="1" stroke-dasharray="1 1.5" opacity="0.32"/>
<line x1="487.5" y1="373" x2="487.5" y2="679" stroke="#8c8c8c" stroke-width="1" stroke-dasharray="1 1.5" opacity="0.32"/>
<line x1="504.5" y1="373" x2="504.5" y2="679" stroke="#8c8c8c" stroke-width="1" stroke-dasharray="1 1.5" opacity="0.32"/>
<line x1="14" y1="685.5" x2="522" y2="685.5" stroke="#8c8c8c" stroke-width="1" stroke-dasharray="1 1.5" opacity="0.32"/>
<line x1="14" y1="667.5" x2="522" y2="667.5" stroke="#8c8c8c" stroke-width="1" stroke-dasharray="1 1.5" opacity="0.32"/>
<line x1="14" y1="650.5" x2="522" y2="650.5" stroke="#8c8c8c" stroke-width="1" stroke-dasharray="1 1.5" opacity="0.32"/>
<line x1="14" y1="632.5" x2="522" y2="632.5" stroke="#8c8c8c" stroke-width="1" stroke-dasharray="1 1.5" opacity="0.32"/>
<line x1="14" y1="614.5" x2="522" y2="614.5" stroke="#8c8c8c" stroke-width="1" stroke-dasharray="1 1.5" opacity="0.32"/>
<line x1="14" y1="597.5" x2="522" y2="597.5" stroke="#8c8c8c" stroke-width="1" stroke-dasharray="1 1.5" opacity="0.32"/>
<line x1="14" y1="579.5" x2="522" y2="579.5" stroke="#8c8c8c" stroke-width="1" stroke-dasharray="1 1.5" opacity="0.32"/>
<line x1="14" y1="562.5" x2="522" y2="562.5" stroke="#8c8c8c" stroke-width="1" stroke-dasharray="1 1.5" opacity="0.32"/>
<line x1="14" y1="544.5" x2="522" y2="544.5" stroke="#8c8c8c" stroke-width="1" stroke-dasharray="1 1.5" opacity="0.32"/>
<line x1="14" y1="526.5" x2="522" y2="526.5" stroke="#8c8c8c" stroke-width="1" stroke-dasharray="1 1.5" opacity="0.32"/>
<line x1="14" y1="509.5" x2="522" y2="509.5" stroke="#8c8c8c" stroke-width="1" stroke-dasharray="1 1.5" opacity="0.32"/>
<line x1="14" y1="491.5" x2="522" y2="491.5" stroke="#8c8c8c" stroke-width="1" stroke-dasharray="1 1.5" opacity="0.32"/>
<line x1="14" y1="474.5" x2="522" y2="474.5" stroke="#8c8c8c" stroke-width="1" stroke-dasharray="1 1.5" opacity="0.32"/>
<line x1="14" y1="456.5" x2="522" y2="456.5" stroke="#8c8c8c" stroke-width="1" stroke-dasharray="1 1.5" opacity="0.32"/>
<line x1="14" y1="438.5" x2="522" y2="438.5" stroke="#8c8c8c" stroke-width="1" stroke-dasharray="1 1.5" opacity="0.32"/>
<line x1="14" y1="421.5" x2="522" y2="421.5" stroke="#8c8c8c" stroke-width="1" stroke-dasharray="1 1.5" opacity="0.32"/>
<line x1="14" y1="403.5" x2="522" y2="403.5" stroke="#8c8c8c" stroke-width="1" stroke-dasharray="1 1.5" opacity="0.32"/>
<line x1="14" y1="386.5" x2="522" y2="386.5" stroke="#8c8c8c" stroke-width="1" stroke-dasharray="1 1.5" opacity="0.32"/>
<line x1="14" y1="368.5" x2="522" y2="368.5" stroke="#8c8c8c" stroke-width="1" stroke-dasharray="1 1.5" opacity="0.32"/>
<rect x="152" y="394" width="265" height="1" fill="#000" />
<rect x="152" y="658" width="265" height="1" fill="#000" />
<rect x="152" y="394" width="1" height="265" fill="#000" />
<rect x="416" y="394" width="1" height="265" fill="#000" />
<rect x="161" y="403" width="247" height="1" fill="#000" />
<rect x="161" y="650" width="247" height="1" fill="#000" />
<rect x="161" y="403" width="1" height="248" fill="#000" />
<rect x="407" y="403" width="1" height="248" fill="#000" />
<rect x="170" y="441" width="229" height="1" fill="#000" />
<rect x="170" y="611" width="229" height="1" fill="#000" />
<rect x="170" y="441" width="1" height="171" fill="#000" />
<rect x="398" y="441" width="1" height="171" fill="#000" />
<rect x="170" y="477" width="157" height="1" fill="#000" />
<rect x="170" y="576" width="157" height="1" fill="#000" />
<rect x="170" y="477" width="1" height="100" fill="#000" />
<rect x="326" y="477" width="1" height="100" fill="#000" />
<line x1="268.5" y1="373" x2="268.5" y2="679" stroke="#ff50ff" stroke-width="1" stroke-dasharray="4.2 3.8"/>
<line x1="12" y1="526.5" x2="522" y2="526.5" stroke="#f26262" stroke-width="1" stroke-dasharray="4 3.75"/>
<line x1="17.4" y1="526.5" x2="522" y2="526.5" stroke="#a0a0a0" stroke-width="1" stroke-dasharray="1 6.75"/>
<rect x="266.3" y="524.5" width="4.4" height="4.4" fill="none" stroke="#ff50ff" stroke-width="1.5" shape-rendering="auto"/>
<rect x="271" y="526" width="9" height="1" fill="#ff60ff" />
<g shape-rendering="auto" fill="none" stroke="#f06060" stroke-width="1"><circle cx="294.3" cy="526.7" r="2"/><path d="M294.5 515 L294.5 524.5"/></g>
<line x1="180.6" y1="373" x2="440.3" y2="679.5" stroke="#48e048" stroke-width="1.2" stroke-dasharray="3.4 4.4" shape-rendering="auto"/>
<g shape-rendering="auto" fill="none" stroke="#4ee44e" stroke-width="1"><rect x="309" y="525" width="4" height="4"/><path d="M312 526 L318.5 519.5"/></g>
<text class="m" x="233.2" y="524.5" font-size="10" fill="#ffffff" opacity="0.5">Rcore</text>
<text class="m" x="232.5" y="523.8" font-size="10" fill="#a65414" stroke="#a65414" stroke-width="0.3">Rcore</text>
<text class="m" x="333" y="524.5" font-size="10" fill="#ffffff" opacity="0.5">Rrefl</text>
<text class="m" x="332.3" y="523.8" font-size="10" fill="#a65414" stroke="#a65414" stroke-width="0.3">Rrefl</text>
<text class="m" x="317.3" y="622" font-size="10" fill="#ffffff" opacity="0.5">Rvac</text>
<text class="m" x="316.6" y="621.3" font-size="10" fill="#a65414" stroke="#a65414" stroke-width="0.3">Rvac</text>
<text class="m" x="15.8" y="666" font-size="10" fill="#f0c848" opacity="0.75">−80</text>
<text class="m" x="16.5" y="666.7" font-size="10" fill="#000">−80</text>
<text class="m" x="15.8" y="649" font-size="10" fill="#f0c848" opacity="0.75">−70</text>
<text class="m" x="16.5" y="649.7" font-size="10" fill="#000">−70</text>
<text class="m" x="15.8" y="631" font-size="10" fill="#f0c848" opacity="0.75">−60</text>
<text class="m" x="16.5" y="631.7" font-size="10" fill="#000">−60</text>
<text class="m" x="15.8" y="613" font-size="10" fill="#f0c848" opacity="0.75">−50</text>
<text class="m" x="16.5" y="613.7" font-size="10" fill="#000">−50</text>
<text class="m" x="15.8" y="596" font-size="10" fill="#f0c848" opacity="0.75">−40</text>
<text class="m" x="16.5" y="596.7" font-size="10" fill="#000">−40</text>
<text class="m" x="15.8" y="578" font-size="10" fill="#f0c848" opacity="0.75">−30</text>
<text class="m" x="16.5" y="578.7" font-size="10" fill="#000">−30</text>
<text class="m" x="15.8" y="561" font-size="10" fill="#f0c848" opacity="0.75">−20</text>
<text class="m" x="16.5" y="561.7" font-size="10" fill="#000">−20</text>
<text class="m" x="15.8" y="543" font-size="10" fill="#f0c848" opacity="0.75">−10</text>
<text class="m" x="16.5" y="543.7" font-size="10" fill="#000">−10</text>
<text class="m" x="15.8" y="525" font-size="10" fill="#f0c848" opacity="0.75">0</text>
<text class="m" x="16.5" y="525.7" font-size="10" fill="#000">0</text>
<text class="m" x="15.8" y="508" font-size="10" fill="#f0c848" opacity="0.75">10</text>
<text class="m" x="16.5" y="508.7" font-size="10" fill="#000">10</text>
<text class="m" x="15.8" y="490" font-size="10" fill="#f0c848" opacity="0.75">20</text>
<text class="m" x="16.5" y="490.7" font-size="10" fill="#000">20</text>
<text class="m" x="15.8" y="473" font-size="10" fill="#f0c848" opacity="0.75">30</text>
<text class="m" x="16.5" y="473.7" font-size="10" fill="#000">30</text>
<text class="m" x="15.8" y="455" font-size="10" fill="#f0c848" opacity="0.75">40</text>
<text class="m" x="16.5" y="455.7" font-size="10" fill="#000">40</text>
<text class="m" x="15.8" y="437" font-size="10" fill="#f0c848" opacity="0.75">50</text>
<text class="m" x="16.5" y="437.7" font-size="10" fill="#000">50</text>
<text class="m" x="15.8" y="420" font-size="10" fill="#f0c848" opacity="0.75">60</text>
<text class="m" x="16.5" y="420.7" font-size="10" fill="#000">60</text>
<text class="m" x="15.8" y="402" font-size="10" fill="#f0c848" opacity="0.75">70</text>
<text class="m" x="16.5" y="402.7" font-size="10" fill="#000">70</text>
<text class="m" x="15.8" y="385" font-size="10" fill="#f0c848" opacity="0.75">80</text>
<text class="m" x="16.5" y="385.7" font-size="10" fill="#000">80</text>
<text class="m" x="29.8" y="677.8" font-size="10" fill="#f0c848" opacity="0.75">−80</text>
<text class="m" x="30.5" y="678.5" font-size="10" fill="#000">−80</text>
<text class="m" x="64.8" y="677.8" font-size="10" fill="#f0c848" opacity="0.75">−60</text>
<text class="m" x="65.5" y="678.5" font-size="10" fill="#000">−60</text>
<text class="m" x="99.8" y="677.8" font-size="10" fill="#f0c848" opacity="0.75">−40</text>
<text class="m" x="100.5" y="678.5" font-size="10" fill="#000">−40</text>
<text class="m" x="134.8" y="677.8" font-size="10" fill="#f0c848" opacity="0.75">−20</text>
<text class="m" x="135.5" y="678.5" font-size="10" fill="#000">−20</text>
<text class="m" x="170.8" y="677.8" font-size="10" fill="#f0c848" opacity="0.75">0</text>
<text class="m" x="171.5" y="678.5" font-size="10" fill="#000">0</text>
<text class="m" x="187.8" y="677.8" font-size="10" fill="#f0c848" opacity="0.75">10</text>
<text class="m" x="188.5" y="678.5" font-size="10" fill="#000">10</text>
<text class="m" x="205.8" y="677.8" font-size="10" fill="#f0c848" opacity="0.75">20</text>
<text class="m" x="206.5" y="678.5" font-size="10" fill="#000">20</text>
<text class="m" x="222.8" y="677.8" font-size="10" fill="#f0c848" opacity="0.75">30</text>
<text class="m" x="223.5" y="678.5" font-size="10" fill="#000">30</text>
<text class="m" x="240.8" y="677.8" font-size="10" fill="#f0c848" opacity="0.75">40</text>
<text class="m" x="241.5" y="678.5" font-size="10" fill="#000">40</text>
<text class="m" x="258.8" y="677.8" font-size="10" fill="#f0c848" opacity="0.75">50</text>
<text class="m" x="259.5" y="678.5" font-size="10" fill="#000">50</text>
<text class="m" x="275.8" y="677.8" font-size="10" fill="#f0c848" opacity="0.75">60</text>
<text class="m" x="276.5" y="678.5" font-size="10" fill="#000">60</text>
<text class="m" x="293.8" y="677.8" font-size="10" fill="#f0c848" opacity="0.75">70</text>
<text class="m" x="294.5" y="678.5" font-size="10" fill="#000">70</text>
<text class="m" x="310.8" y="677.8" font-size="10" fill="#f0c848" opacity="0.75">80</text>
<text class="m" x="311.5" y="678.5" font-size="10" fill="#000">80</text>
<text class="m" x="328.8" y="677.8" font-size="10" fill="#f0c848" opacity="0.75">90</text>
<text class="m" x="329.5" y="678.5" font-size="10" fill="#000">90</text>
<text class="m" x="346.8" y="677.8" font-size="10" fill="#f0c848" opacity="0.75">100</text>
<text class="m" x="347.5" y="678.5" font-size="10" fill="#000">100</text>
<text class="m" x="381.8" y="677.8" font-size="10" fill="#f0c848" opacity="0.75">120</text>
<text class="m" x="382.5" y="678.5" font-size="10" fill="#000">120</text>
<text class="m" x="416.8" y="677.8" font-size="10" fill="#f0c848" opacity="0.75">140</text>
<text class="m" x="417.5" y="678.5" font-size="10" fill="#000">140</text>
<text class="m" x="451.8" y="677.8" font-size="10" fill="#f0c848" opacity="0.75">160</text>
<text class="m" x="452.5" y="678.5" font-size="10" fill="#000">160</text>
<text class="m" x="487.8" y="677.8" font-size="10" fill="#f0c848" opacity="0.75">180</text>
<text class="m" x="488.5" y="678.5" font-size="10" fill="#000">180</text>
<path d="M15.5 375 L18.5 378.5 L21.5 375 M18.5 378.5 L18.5 382" stroke="#00d000" stroke-width="1.4" fill="none" shape-rendering="auto"/>
<text x="515.3" y="678.8" font-size="9.2" fill="#000" opacity="0.7">Z</text>
<text x="514.5" y="678" font-size="9.2" fill="#0000ff" stroke="#0000ff" stroke-width="0.5">Z</text>
<rect x="34" y="637" width="26" height="25" fill="#e2ded9" />
<rect x="34" y="637" width="26" height="1" fill="#8a8a8a" />
<rect x="34" y="661" width="26" height="1" fill="#8a8a8a" />
<rect x="34" y="637" width="1" height="25" fill="#8a8a8a" />
<rect x="59" y="637" width="1" height="25" fill="#8a8a8a" />
<rect x="33" y="627" width="2" height="36" fill="#00e000" />
<rect x="34" y="661" width="34" height="2" fill="#0000ff" />
<text x="46.5" y="652.5" font-size="9.5" fill="#333" stroke="#333" stroke-width="0.25" text-anchor="middle">R</text>
<text x="33.6" y="624.8" font-size="9.5" fill="#10d010" stroke="#10d010" stroke-width="0.4">y</text>
<path d="M35.5 657.5 L38.5 660.5 M38.5 657.5 L35.5 660.5" stroke="#ff2020" stroke-width="1" shape-rendering="auto"/>
<text x="71" y="662" font-size="10" font-weight="bold" fill="#0000ff">z</text>
</g>
<g clip-path="url(#c3)">
<rect x="527" y="373" width="502" height="306" fill="#ffffff" />
<path d="M523 371L214 680M530 371L221 680M536 371L227 680M542 371L233 680M548 371L239 680M555 371L246 680M561 371L252 680M567 371L258 680M573 371L264 680M580 371L271 680M586 371L277 680M592 371L283 680M598 371L289 680M605 371L296 680M611 371L302 680M617 371L308 680M623 371L314 680M630 371L321 680M636 371L327 680M642 371L333 680M648 371L339 680M655 371L346 680M661 371L352 680M667 371L358 680M673 371L364 680M680 371L371 680M686 371L377 680M692 371L383 680M698 371L389 680M705 371L396 680M711 371L402 680M717 371L408 680M723 371L414 680M730 371L421 680M736 371L427 680M742 371L433 680M748 371L439 680M755 371L446 680M761 371L452 680M767 371L458 680M773 371L464 680M780 371L471 680M786 371L477 680M792 371L483 680M798 371L489 680M805 371L496 680M811 371L502 680M817 371L508 680M823 371L514 680M830 371L521 680M836 371L527 680M842 371L533 680M848 371L539 680M855 371L546 680M861 371L552 680M867 371L558 680M873 371L564 680M880 371L571 680M886 371L577 680M892 371L583 680M898 371L589 680M905 371L596 680M911 371L602 680M917 371L608 680M923 371L614 680M930 371L621 680M936 371L627 680M942 371L633 680M948 371L639 680M955 371L646 680M961 371L652 680M967 371L658 680M973 371L664 680M980 371L671 680M986 371L677 680M992 371L683 680M998 371L689 680M1005 371L696 680M1011 371L702 680M1017 371L708 680M1023 371L714 680M1030 371L721 680M1036 371L727 680M1042 371L733 680M1048 371L739 680M1055 371L746 680M1061 371L752 680M1067 371L758 680M1073 371L764 680M1080 371L771 680M1086 371L777 680M1092 371L783 680M1098 371L789 680M1105 371L796 680M1111 371L802 680M1117 371L808 680M1123 371L814 680M1130 371L821 680M1136 371L827 680M1142 371L833 680M1148 371L839 680M1155 371L846 680M1161 371L852 680M1167 371L858 680M1173 371L864 680M1180 371L871 680M1186 371L877 680M1192 371L883 680M1198 371L889 680M1205 371L896 680M1211 371L902 680M1217 371L908 680M1223 371L914 680M1230 371L921 680M1236 371L927 680M1242 371L933 680M1248 371L939 680M1255 371L946 680M1261 371L952 680M1267 371L958 680M1273 371L964 680M1280 371L971 680M1286 371L977 680M1292 371L983 680M1298 371L989 680M1305 371L996 680M1311 371L1002 680M1317 371L1008 680M1323 371L1014 680M1330 371L1021 680M1336 371L1027 680M1342 371L1033 680M1348 371L1039 680" stroke="#ffeaea" stroke-width="1" fill="none"/>
<path d="M522 371L213 680M529 371L220 680M535 371L226 680M541 371L232 680M547 371L238 680M554 371L245 680M560 371L251 680M566 371L257 680M572 371L263 680M579 371L270 680M585 371L276 680M591 371L282 680M597 371L288 680M604 371L295 680M610 371L301 680M616 371L307 680M622 371L313 680M629 371L320 680M635 371L326 680M641 371L332 680M647 371L338 680M654 371L345 680M660 371L351 680M666 371L357 680M672 371L363 680M679 371L370 680M685 371L376 680M691 371L382 680M697 371L388 680M704 371L395 680M710 371L401 680M716 371L407 680M722 371L413 680M729 371L420 680M735 371L426 680M741 371L432 680M747 371L438 680M754 371L445 680M760 371L451 680M766 371L457 680M772 371L463 680M779 371L470 680M785 371L476 680M791 371L482 680M797 371L488 680M804 371L495 680M810 371L501 680M816 371L507 680M822 371L513 680M829 371L520 680M835 371L526 680M841 371L532 680M847 371L538 680M854 371L545 680M860 371L551 680M866 371L557 680M872 371L563 680M879 371L570 680M885 371L576 680M891 371L582 680M897 371L588 680M904 371L595 680M910 371L601 680M916 371L607 680M922 371L613 680M929 371L620 680M935 371L626 680M941 371L632 680M947 371L638 680M954 371L645 680M960 371L651 680M966 371L657 680M972 371L663 680M979 371L670 680M985 371L676 680M991 371L682 680M997 371L688 680M1004 371L695 680M1010 371L701 680M1016 371L707 680M1022 371L713 680M1029 371L720 680M1035 371L726 680M1041 371L732 680M1047 371L738 680M1054 371L745 680M1060 371L751 680M1066 371L757 680M1072 371L763 680M1079 371L770 680M1085 371L776 680M1091 371L782 680M1097 371L788 680M1104 371L795 680M1110 371L801 680M1116 371L807 680M1122 371L813 680M1129 371L820 680M1135 371L826 680M1141 371L832 680M1147 371L838 680M1154 371L845 680M1160 371L851 680M1166 371L857 680M1172 371L863 680M1179 371L870 680M1185 371L876 680M1191 371L882 680M1197 371L888 680M1204 371L895 680M1210 371L901 680M1216 371L907 680M1222 371L913 680M1229 371L920 680M1235 371L926 680M1241 371L932 680M1247 371L938 680M1254 371L945 680M1260 371L951 680M1266 371L957 680M1272 371L963 680M1279 371L970 680M1285 371L976 680M1291 371L982 680M1297 371L988 680M1304 371L995 680M1310 371L1001 680M1316 371L1007 680M1322 371L1013 680M1329 371L1020 680M1335 371L1026 680M1341 371L1032 680M1347 371L1038 680" stroke="#ffb4b4" stroke-width="1" fill="none"/>
<rect x="683" y="416" width="220" height="222" fill="#404040" />
<rect x="691" y="425" width="204" height="205" fill="#ffffff" />
<polygon points="865.05,519.51 862.29,505.61 856.86,492.52 848.99,480.73 838.97,470.71 827.18,462.84 814.09,457.41 800.19,454.65 786.01,454.65 772.11,457.41 759.02,462.84 747.23,470.71 737.21,480.73 729.34,492.52 723.91,505.61 721.15,519.51 721.15,533.69 723.91,547.59 729.34,560.68 737.21,572.47 747.23,582.49 759.02,590.36 772.11,595.79 786.01,598.55 800.19,598.55 814.09,595.79 827.18,590.36 838.97,582.49 848.99,572.47 856.86,560.68 862.29,547.59 865.05,533.69" fill="#ccbbb7" shape-rendering="auto"/>
<line x1="646.5" y1="373" x2="646.5" y2="679" stroke="#8c8c8c" stroke-width="1" stroke-dasharray="1 1.5" opacity="0.32"/>
<line x1="793.5" y1="373" x2="793.5" y2="679" stroke="#8c8c8c" stroke-width="1" stroke-dasharray="1 1.5" opacity="0.32"/>
<line x1="939.5" y1="373" x2="939.5" y2="679" stroke="#8c8c8c" stroke-width="1" stroke-dasharray="1 1.5" opacity="0.32"/>
<line x1="1086.5" y1="373" x2="1086.5" y2="679" stroke="#8c8c8c" stroke-width="1" stroke-dasharray="1 1.5" opacity="0.32"/>
<line x1="527" y1="379.5" x2="1029" y2="379.5" stroke="#8c8c8c" stroke-width="1" stroke-dasharray="1 1.5" opacity="0.32"/>
<line x1="527" y1="526.5" x2="1029" y2="526.5" stroke="#8c8c8c" stroke-width="1" stroke-dasharray="1 1.5" opacity="0.32"/>
<line x1="527" y1="673.5" x2="1029" y2="673.5" stroke="#8c8c8c" stroke-width="1" stroke-dasharray="1 1.5" opacity="0.32"/>
<rect x="683" y="416" width="220" height="1" fill="#000" />
<rect x="683" y="637" width="220" height="1" fill="#000" />
<rect x="683" y="416" width="1" height="222" fill="#000" />
<rect x="902" y="416" width="1" height="222" fill="#000" />
<rect x="690" y="424" width="206" height="1" fill="#000" />
<rect x="690" y="630" width="206" height="1" fill="#000" />
<rect x="690" y="424" width="1" height="207" fill="#000" />
<rect x="895" y="424" width="1" height="207" fill="#000" />
<polygon points="865.05,519.51 862.29,505.61 856.86,492.52 848.99,480.73 838.97,470.71 827.18,462.84 814.09,457.41 800.19,454.65 786.01,454.65 772.11,457.41 759.02,462.84 747.23,470.71 737.21,480.73 729.34,492.52 723.91,505.61 721.15,519.51 721.15,533.69 723.91,547.59 729.34,560.68 737.21,572.47 747.23,582.49 759.02,590.36 772.11,595.79 786.01,598.55 800.19,598.55 814.09,595.79 827.18,590.36 838.97,582.49 848.99,572.47 856.86,560.68 862.29,547.59 865.05,533.69" fill="none" stroke="#000" stroke-width="1.2" shape-rendering="auto"/>
<polygon points="836.49,522.33 834.82,513.94 831.55,506.05 826.8,498.94 820.76,492.9 813.65,488.15 805.76,484.88 797.37,483.21 788.83,483.21 780.44,484.88 772.55,488.15 765.44,492.9 759.4,498.94 754.65,506.05 751.38,513.94 749.71,522.33 749.71,530.87 751.38,539.26 754.65,547.15 759.4,554.26 765.44,560.3 772.55,565.05 780.44,568.32 788.83,569.99 797.37,569.99 805.76,568.32 813.65,565.05 820.76,560.3 826.8,554.26 831.55,547.15 834.82,539.26 836.49,530.87" fill="none" stroke="#000" stroke-width="1.2" shape-rendering="auto"/>
<line x1="778.5" y1="373" x2="778.5" y2="679" stroke="#6060ff" stroke-width="1" stroke-dasharray="4.2 3.8"/>
<line x1="525" y1="526.5" x2="1029" y2="526.5" stroke="#f26262" stroke-width="1" stroke-dasharray="4 3.75"/>
<line x1="530.4" y1="526.5" x2="1029" y2="526.5" stroke="#a0a0a0" stroke-width="1" stroke-dasharray="1 6.75"/>
<rect x="776.5" y="524.5" width="4" height="4" fill="none" stroke="#6a6af0" stroke-width="1"/>
<rect x="767" y="526" width="10" height="1" fill="#6a6af0" />
<rect x="789.5" y="524.5" width="4" height="4" fill="none" stroke="#f06060" stroke-width="1"/>
<rect x="791" y="516" width="1" height="9" fill="#f06060" />
<line x1="727.1" y1="373" x2="648.8" y2="680" stroke="#48e048" stroke-width="1.2" stroke-dasharray="3.4 4.4" shape-rendering="auto"/>
<g shape-rendering="auto" fill="none" stroke="#3ee03e" stroke-width="1.2"><rect x="685.5" y="524.5" width="4" height="4"/><path d="M685.5 525.5 L678.5 522.5"/></g>
<text class="m" x="809.2" y="441.7" font-size="10" fill="#ffffff" opacity="0.5">Rvac</text>
<text class="m" x="808.5" y="441" font-size="10" fill="#a65414" stroke="#a65414" stroke-width="0.3">Rvac</text>
<text class="m" x="753.4" y="476.7" font-size="10" fill="#ffffff" opacity="0.5">Rrefl</text>
<text class="m" x="752.7" y="476" font-size="10" fill="#a65414" stroke="#a65414" stroke-width="0.3">Rrefl</text>
<text class="m" x="779.3" y="523.7" font-size="10" fill="#ffffff" opacity="0.5">Rcore</text>
<text class="m" x="778.6" y="523" font-size="10" fill="#a65414" stroke="#a65414" stroke-width="0.3">Rcore</text>
<text class="m" x="524.3" y="525" font-size="10" fill="#f0c848" opacity="0.75">0</text>
<text class="m" x="525" y="525.7" font-size="10" fill="#000">0</text>
<text class="m" x="527.3" y="378" font-size="10" fill="#f0c848" opacity="0.75">100</text>
<text class="m" x="528" y="378.7" font-size="10" fill="#000">100</text>
<text class="m" x="527.3" y="672" font-size="10" fill="#f0c848" opacity="0.75">−100</text>
<text class="m" x="528" y="672.7" font-size="10" fill="#000">−100</text>
<text class="m" x="647.3" y="677.8" font-size="10" fill="#f0c848" opacity="0.75">−100</text>
<text class="m" x="648" y="678.5" font-size="10" fill="#000">−100</text>
<text class="m" x="794.3" y="677.8" font-size="10" fill="#f0c848" opacity="0.75">0</text>
<text class="m" x="795" y="678.5" font-size="10" fill="#000">0</text>
<text class="m" x="940.3" y="677.8" font-size="10" fill="#f0c848" opacity="0.75">100</text>
<text class="m" x="941" y="678.5" font-size="10" fill="#000">100</text>
<path d="M1022 670.5 L1028 677.5 M1028 670.5 L1022 677.5" stroke="#ff2020" stroke-width="1.4" shape-rendering="auto"/>
<rect x="544" y="637" width="25" height="25" fill="#e2ded9" />
<rect x="544" y="637" width="25" height="1" fill="#8a8a8a" />
<rect x="544" y="661" width="25" height="1" fill="#8a8a8a" />
<rect x="544" y="637" width="1" height="25" fill="#8a8a8a" />
<rect x="568" y="637" width="1" height="25" fill="#8a8a8a" />
<rect x="543" y="627" width="2" height="36" fill="#00e000" />
<rect x="544" y="661" width="34" height="2" fill="#ff0000" />
<text x="556.3" y="652.5" font-size="9.5" fill="#333" stroke="#333" stroke-width="0.25" text-anchor="middle">F</text>
<text x="543.1" y="624.8" font-size="9.5" fill="#10d010" stroke="#10d010" stroke-width="0.4">y</text>
<text x="544" y="661" font-size="7" font-weight="bold" fill="#0000ff">z</text>
<path d="M581.8 657.2 L586.2 662 M586.2 657.2 L581.8 662" stroke="#ff1010" stroke-width="1.3" shape-rendering="auto"/>
</g>
<rect x="14" y="679" width="1015" height="1" fill="#6e6e6e" />
<rect x="0" y="680" width="1034" height="16" fill="#d9d9d9" />
<rect x="1029" y="680" width="5" height="16" fill="#c8c8c8" />
<rect x="2" y="680" width="993" height="1" fill="#8a8a8a" />
<rect x="2" y="680" width="1" height="16" fill="#8a8a8a" />
<rect x="3" y="681" width="992" height="1" fill="#ffffff" />
<rect x="3" y="681" width="1" height="15" fill="#ffffff" />
<rect x="3" y="694" width="992" height="1" fill="#ececec" />
<rect x="994" y="680" width="1" height="16" fill="#ffffff" />
<rect x="996" y="680" width="16" height="1" fill="#bcbcbc" />
<rect x="996" y="680" width="1" height="16" fill="#ffffff" />
<rect x="1011" y="680" width="1" height="16" fill="#a0a0a0" />
<rect x="997" y="682" width="14" height="1" fill="#f0f0f0" />
<rect x="998" y="682" width="1" height="11" fill="#f0f0f0" />
<rect x="1000" y="684" width="8.8" height="6.8" fill="#111"/>
<rect x="1000.6" y="684.6" width="1.3" height="1.3" fill="#eee"/>
<rect x="1002.5" y="686.6" width="1.2" height="0.8" fill="#888"/>
<rect x="998" y="692" width="13" height="1" fill="#f4f4f4" />
<rect x="1013" y="680" width="1" height="16" fill="#ffffff" />
<rect x="1028" y="680" width="1" height="16" fill="#a0a0a0" />
<g shape-rendering="auto" fill="none"><path d="M1017.5 685.5 L1026.3 692.2" stroke="#000" stroke-width="3"/><path d="M1017.5 685.5 L1026.3 692.2" stroke="#fff" stroke-width="1.2"/><path d="M1015.6 685.4 A2.6 2.6 0 1 0 1018.6 682.3" stroke="#000" stroke-width="2.4"/><path d="M1015.6 685.4 A2.6 2.6 0 1 0 1018.6 682.3" stroke="#fff" stroke-width="0.9"/><path d="M1020.5 688.2 L1026.2 682.6" stroke="#000" stroke-width="2.2"/><path d="M1020.5 688.2 L1026.2 682.6" stroke="#cde4ff" stroke-width="0.9"/><path d="M1015.6 692.6 L1020.6 688" stroke="#102060" stroke-width="3.4"/><path d="M1015.8 692.3 L1020.4 688.2" stroke="#3c6ad8" stroke-width="2"/></g>
</svg>
</body></html>
